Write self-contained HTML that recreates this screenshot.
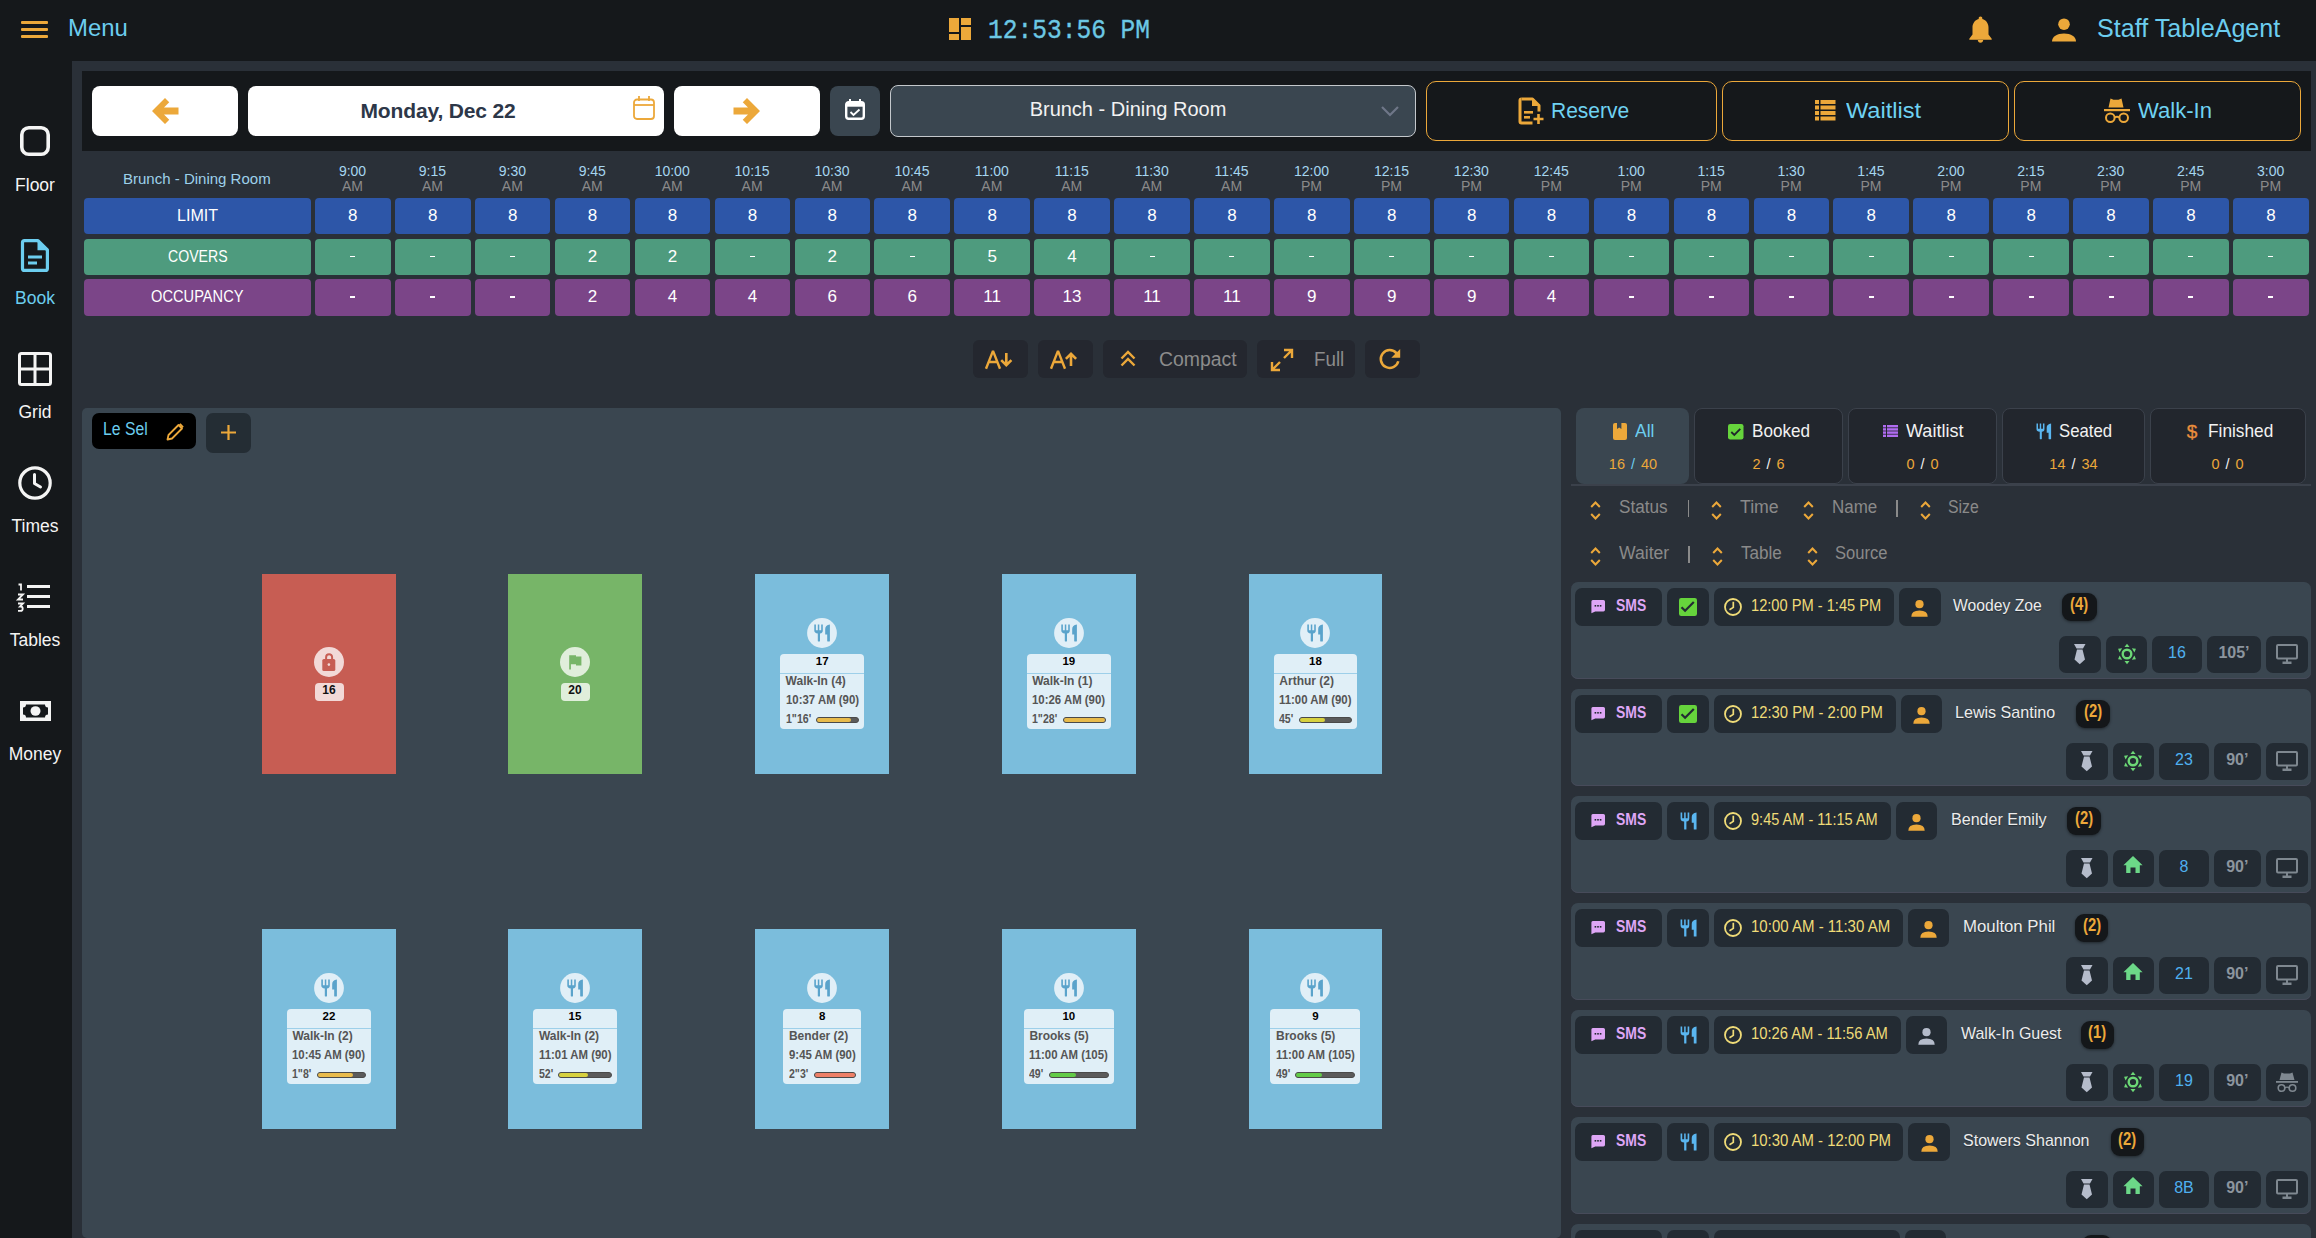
<!DOCTYPE html>
<html><head><meta charset="utf-8"><title>TableAgent</title>
<style>
html,body{margin:0;padding:0;}
body{width:2316px;height:1238px;overflow:hidden;position:relative;background:#2a3038;font-family:"Liberation Sans",sans-serif;}
</style></head><body>
<div style="position:absolute;left:0px;top:0px;width:2316px;height:61px;background:#15181b;border-radius:0px;"></div>
<div style="position:absolute;left:0px;top:61px;width:72px;height:1177px;background:#15181b;border-radius:0px;"></div>
<div style="position:absolute;left:21px;top:20.5px;width:27px;height:3.2px;background:#eca83a;border-radius:1px;"></div>
<div style="position:absolute;left:21px;top:27.8px;width:27px;height:3.2px;background:#eca83a;border-radius:1px;"></div>
<div style="position:absolute;left:21px;top:35px;width:27px;height:3.2px;background:#eca83a;border-radius:1px;"></div>
<div style="position:absolute;left:68.00px;top:16.36px;font:400 24.5px/1 'Liberation Sans', sans-serif;color:#6ccdef;white-space:nowrap;transform:scaleX(0.9754);transform-origin:0 0;">Menu</div>
<svg style="position:absolute;left:949px;top:18px;overflow:visible;" width="22" height="22" viewBox="0 0 22 22"><rect x="0" y="0" width="10" height="14" fill="#eca83a"/><rect x="12" y="0" width="10" height="7" fill="#eca83a"/><rect x="12" y="9" width="10" height="13" fill="#eca83a"/><rect x="0" y="16" width="10" height="6" fill="#eca83a"/></svg>
<div style="position:absolute;left:987.50px;top:16.90px;font:400 27.8px/1 'Liberation Mono', monospace;color:#6cc8e4;white-space:nowrap;transform:scaleX(0.8832);transform-origin:0 0;-webkit-text-stroke:0.35px #6cc8e4;">12:53:56&nbsp;PM</div>
<svg style="position:absolute;left:1969px;top:16px;overflow:visible;" width="23" height="27" viewBox="0 0 23 27"><path d="M11.5 0.5c1.2 0 1.8 0.8 1.8 1.8v0.6c4 1 6.2 4.6 6.2 8.6v7l3.2 4.3v0.9H0.3v-0.9l3.2-4.3v-7c0-4 2.2-7.6 6.2-8.6V2.3c0-1 0.6-1.8 1.8-1.8z" fill="#eca83a"/><path d="M8.8 24h5.4c0 1.6-1.2 2.8-2.7 2.8s-2.7-1.2-2.7-2.8z" fill="#eca83a"/></svg>
<svg style="position:absolute;left:2052px;top:18px;overflow:visible;" width="24" height="24" viewBox="0 0 24 24"><circle cx="12" cy="6.2" r="5.8" fill="#eca83a"/><path d="M0 23.5c0-5 5-8 12-8s12 3 12 8z" fill="#eca83a"/></svg>
<div style="position:absolute;left:2096.60px;top:15.91px;font:400 25.5px/1 'Liberation Sans', sans-serif;color:#6ccdef;white-space:nowrap;transform:scaleX(0.9840);transform-origin:0 0;">Staff TableAgent</div>
<svg style="position:absolute;left:20px;top:126px;overflow:visible;" width="30" height="30" viewBox="0 0 30 30"><rect x="1.8" y="1.8" width="26.4" height="26.4" rx="7" fill="none" stroke="#f4f4f4" stroke-width="3.6"/></svg>
<div style="position:absolute;left:-565px;width:1200px;text-align:center;top:176.68px;font:400 17.5px/1 'Liberation Sans', sans-serif;color:#f4f4f4;white-space:nowrap;">Floor</div>
<svg style="position:absolute;left:21px;top:239px;overflow:visible;" width="28" height="33" viewBox="0 0 28 33"><path d="M3.5 1.6h13.5l9.4 9.4v18.4c0 1.2-0.9 2-2 2H3.5c-1.2 0-2-0.9-2-2V3.6c0-1.2 0.9-2 2-2z" fill="none" stroke="#6ccdef" stroke-width="3.2" stroke-linejoin="round"/><path d="M16.5 1.6v9.6h9.6z" fill="#6ccdef"/><rect x="7" y="16.5" width="14" height="3" fill="#6ccdef"/><rect x="7" y="22.5" width="9" height="3" fill="#6ccdef"/></svg>
<div style="position:absolute;left:-565px;width:1200px;text-align:center;top:289.98px;font:400 17.5px/1 'Liberation Sans', sans-serif;color:#6ccdef;white-space:nowrap;">Book</div>
<svg style="position:absolute;left:18px;top:352px;overflow:visible;" width="34" height="34" viewBox="0 0 34 34"><rect x="1.5" y="1.5" width="31" height="31" rx="2" fill="none" stroke="#f4f4f4" stroke-width="3"/><line x1="17" y1="1.5" x2="17" y2="32.5" stroke="#f4f4f4" stroke-width="3"/><line x1="1.5" y1="17" x2="32.5" y2="17" stroke="#f4f4f4" stroke-width="3"/></svg>
<div style="position:absolute;left:-565px;width:1200px;text-align:center;top:403.88px;font:400 17.5px/1 'Liberation Sans', sans-serif;color:#f4f4f4;white-space:nowrap;">Grid</div>
<svg style="position:absolute;left:18px;top:466px;overflow:visible;" width="34" height="34" viewBox="0 0 34 34"><circle cx="17" cy="17" r="15.2" fill="none" stroke="#f4f4f4" stroke-width="3.2"/><path d="M16.5 8.5v9l6 3.5" fill="none" stroke="#f4f4f4" stroke-width="3" stroke-linecap="round" stroke-linejoin="round"/></svg>
<div style="position:absolute;left:-565px;width:1200px;text-align:center;top:518.08px;font:400 17.5px/1 'Liberation Sans', sans-serif;color:#f4f4f4;white-space:nowrap;">Times</div>
<svg style="position:absolute;left:17px;top:583px;overflow:visible;" width="34" height="28" viewBox="0 0 34 28"><rect x="10" y="2" width="23" height="3" fill="#f4f4f4"/><rect x="10" y="12" width="23" height="3" fill="#f4f4f4"/><rect x="10" y="22" width="23" height="3" fill="#f4f4f4"/><path d="M1.5 1.5h2.5v6" fill="none" stroke="#f4f4f4" stroke-width="1.8"/><path d="M1 11.5h5l-5 5h5" fill="none" stroke="#f4f4f4" stroke-width="1.8"/><path d="M1 20.5h5l-3 3h0.5a2.2 2.2 0 0 1 0 4.4H1" fill="none" stroke="#f4f4f4" stroke-width="1.8"/></svg>
<div style="position:absolute;left:-565px;width:1200px;text-align:center;top:631.88px;font:400 17.5px/1 'Liberation Sans', sans-serif;color:#f4f4f4;white-space:nowrap;">Tables</div>
<svg style="position:absolute;left:19.5px;top:701px;overflow:visible;" width="31" height="20" viewBox="0 0 31 20"><rect x="0" y="0" width="31" height="20" fill="#f4f4f4"/><path d="M6 3.5h19a3 3 0 0 0 3 3v7a3 3 0 0 0-3 3H6a3 3 0 0 0-3-3v-7a3 3 0 0 0 3-3z" fill="#15181b"/><ellipse cx="15.5" cy="10" rx="5" ry="4.8" fill="#f4f4f4"/></svg>
<div style="position:absolute;left:-565px;width:1200px;text-align:center;top:746.18px;font:400 17.5px/1 'Liberation Sans', sans-serif;color:#f4f4f4;white-space:nowrap;">Money</div>
<div style="position:absolute;left:82px;top:71px;width:2229px;height:80px;background:#15181b;border-radius:0px;"></div>
<div style="position:absolute;left:92px;top:86px;width:146px;height:50px;background:#ffffff;border-radius:8px;"></div>
<svg style="position:absolute;left:152px;top:98px;overflow:visible;" width="27" height="26" viewBox="0 0 27 26"><path d="M0 13L13 0L17.25 4.25L12 9.6H26.5V16.4H12L17.25 21.75L13 26Z" fill="#eca83a"/></svg>
<div style="position:absolute;left:248px;top:86px;width:416px;height:50px;background:#ffffff;border-radius:8px;"></div>
<div style="position:absolute;left:360.5px;top:100.22px;font:700 21px/1 'Liberation Sans', sans-serif;color:#2d3748;white-space:nowrap;letter-spacing:-0.15px;">Monday, Dec 22</div>
<svg style="position:absolute;left:633px;top:96px;overflow:visible;" width="22" height="24" viewBox="0 0 22 24"><rect x="1" y="3.5" width="20" height="19.5" rx="3" fill="none" stroke="#eca83a" stroke-width="1.8"/><line x1="1" y1="9" x2="21" y2="9" stroke="#eca83a" stroke-width="1.8"/><line x1="6" y1="0" x2="6" y2="5" stroke="#eca83a" stroke-width="1.8"/><line x1="16" y1="0" x2="16" y2="5" stroke="#eca83a" stroke-width="1.8"/></svg>
<div style="position:absolute;left:674px;top:86px;width:146px;height:50px;background:#ffffff;border-radius:8px;"></div>
<svg style="position:absolute;left:733.2px;top:98px;overflow:visible;" width="27" height="26" viewBox="0 0 27 26"><g transform="translate(27 0) scale(-1 1)"><path d="M0 13L13 0L17.25 4.25L12 9.6H26.5V16.4H12L17.25 21.75L13 26Z" fill="#eca83a"/></g></svg>
<div style="position:absolute;left:830px;top:86px;width:50px;height:50px;background:#3a4650;border-radius:8px;"></div>
<svg style="position:absolute;left:845px;top:99px;overflow:visible;" width="20" height="21" viewBox="0 0 20 21"><rect x="1.2" y="3.2" width="17.6" height="16.6" rx="2.5" fill="none" stroke="#ffffff" stroke-width="2.4"/><rect x="1.2" y="3.2" width="17.6" height="4.5" fill="#ffffff"/><line x1="5" y1="0" x2="5" y2="4" stroke="#ffffff" stroke-width="2"/><line x1="15" y1="0" x2="15" y2="4" stroke="#ffffff" stroke-width="2"/><path d="M5.5 13l3 3 6-5.5" fill="none" stroke="#ffffff" stroke-width="1.8"/></svg>
<div style="position:absolute;left:889.5px;top:85px;width:526.5px;height:52px;background:#3a4650;border-radius:8px;box-sizing:border-box;border:1.6px solid #c4c8cc;"></div>
<div style="position:absolute;left:528px;width:1200px;text-align:center;top:99.17px;font:400 20px/1 'Liberation Sans', sans-serif;color:#f2f2f2;white-space:nowrap;">Brunch - Dining Room</div>
<svg style="position:absolute;left:1381px;top:106px;overflow:visible;" width="18" height="10" viewBox="0 0 18 10"><path d="M1 1l8 8 8-8" fill="none" stroke="#6f7788" stroke-width="2.2"/></svg>
<div style="position:absolute;left:1426px;top:81px;width:291px;height:60px;background:transparent;border-radius:10px;box-sizing:border-box;border:1.6px solid #eca83a;"></div>
<svg style="position:absolute;left:1519px;top:98px;overflow:visible;" width="25" height="27" viewBox="0 0 25 27"><path d="M2.5 1h11l6.5 6.5v6" fill="none" stroke="#eca83a" stroke-width="3" stroke-linejoin="round"/><path d="M2.5 1Q1 1 1 2.5v21q0 1.5 1.5 1.5h11" fill="none" stroke="#eca83a" stroke-width="3"/><path d="M13 1v7h7z" fill="#eca83a"/><rect x="5" y="13" width="9" height="2.6" fill="#eca83a"/><rect x="5" y="18" width="6" height="2.6" fill="#eca83a"/><path d="M19.5 16v10M14.5 21h10" stroke="#eca83a" stroke-width="2.6"/></svg>
<div style="position:absolute;left:1550.50px;top:100.17px;font:400 22px/1 'Liberation Sans', sans-serif;color:#6fd2f2;white-space:nowrap;transform:scaleX(0.9549);transform-origin:0 0;">Reserve</div>
<div style="position:absolute;left:1722px;top:81px;width:287px;height:60px;background:transparent;border-radius:10px;box-sizing:border-box;border:1.6px solid #eca83a;"></div>
<svg style="position:absolute;left:1815px;top:100px;overflow:visible;" width="21" height="21" viewBox="0 0 21 21"><rect x="0" y="0" width="4" height="4" fill="#eca83a"/><rect x="0" y="5.5" width="4" height="4" fill="#eca83a"/><rect x="0" y="11" width="4" height="4" fill="#eca83a"/><rect x="0" y="16.5" width="4" height="4" fill="#eca83a"/><rect x="5.5" y="0" width="15" height="4" fill="#eca83a"/><rect x="5.5" y="5.5" width="15" height="4" fill="#eca83a"/><rect x="5.5" y="11" width="15" height="4" fill="#eca83a"/><rect x="5.5" y="16.5" width="15" height="4" fill="#eca83a"/></svg>
<div style="position:absolute;left:1845.50px;top:100.17px;font:400 22px/1 'Liberation Sans', sans-serif;color:#6fd2f2;white-space:nowrap;transform:scaleX(1.0714);transform-origin:0 0;">Waitlist</div>
<div style="position:absolute;left:2014px;top:81px;width:287px;height:60px;background:transparent;border-radius:10px;box-sizing:border-box;border:1.6px solid #eca83a;"></div>
<svg style="position:absolute;left:2104px;top:98px;overflow:visible;" width="26" height="25" viewBox="0 0 26 25"><path d="M6.5 0.5l3 1.2h5l3-1.2 2 9h-15z" fill="#eca83a"/><rect x="0" y="11" width="26" height="2.2" fill="#eca83a"/><circle cx="6.3" cy="19.8" r="4.3" fill="none" stroke="#eca83a" stroke-width="2"/><circle cx="19.7" cy="19.8" r="4.3" fill="none" stroke="#eca83a" stroke-width="2"/><path d="M10.6 19.5q2.4-1.5 4.8 0" fill="none" stroke="#eca83a" stroke-width="1.8"/></svg>
<div style="position:absolute;left:2137.50px;top:100.17px;font:400 22px/1 'Liberation Sans', sans-serif;color:#6fd2f2;white-space:nowrap;transform:scaleX(1.0041);transform-origin:0 0;">Walk-In</div>
<div style="position:absolute;left:123.30px;top:171.52px;font:400 14.5px/1 'Liberation Sans', sans-serif;color:#9dd0ea;white-space:nowrap;transform:scaleX(1.0350);transform-origin:0 0;">Brunch - Dining Room</div>
<div style="position:absolute;left:84px;top:198px;width:227px;height:36px;background:#2d56a8;border-radius:4px;"></div>
<div style="position:absolute;left:177.15px;top:206.81px;font:400 17px/1 'Liberation Sans', sans-serif;color:#ffffff;white-space:nowrap;transform:scaleX(0.9465);transform-origin:0 0;">LIMIT</div>
<div style="position:absolute;left:315.0px;top:198px;width:75.6px;height:36px;background:#2d56a8;border-radius:4px;"></div>
<div style="position:absolute;left:-247.2px;width:1200px;text-align:center;top:206.81px;font:400 17px/1 'Liberation Sans', sans-serif;color:#ffffff;white-space:nowrap;">8</div>
<div style="position:absolute;left:394.92px;top:198px;width:75.6px;height:36px;background:#2d56a8;border-radius:4px;"></div>
<div style="position:absolute;left:-167.27999999999997px;width:1200px;text-align:center;top:206.81px;font:400 17px/1 'Liberation Sans', sans-serif;color:#ffffff;white-space:nowrap;">8</div>
<div style="position:absolute;left:474.84px;top:198px;width:75.6px;height:36px;background:#2d56a8;border-radius:4px;"></div>
<div style="position:absolute;left:-87.36000000000001px;width:1200px;text-align:center;top:206.81px;font:400 17px/1 'Liberation Sans', sans-serif;color:#ffffff;white-space:nowrap;">8</div>
<div style="position:absolute;left:554.76px;top:198px;width:75.6px;height:36px;background:#2d56a8;border-radius:4px;"></div>
<div style="position:absolute;left:-7.440000000000055px;width:1200px;text-align:center;top:206.81px;font:400 17px/1 'Liberation Sans', sans-serif;color:#ffffff;white-space:nowrap;">8</div>
<div style="position:absolute;left:634.68px;top:198px;width:75.6px;height:36px;background:#2d56a8;border-radius:4px;"></div>
<div style="position:absolute;left:72.48000000000002px;width:1200px;text-align:center;top:206.81px;font:400 17px/1 'Liberation Sans', sans-serif;color:#ffffff;white-space:nowrap;">8</div>
<div style="position:absolute;left:714.6px;top:198px;width:75.6px;height:36px;background:#2d56a8;border-radius:4px;"></div>
<div style="position:absolute;left:152.39999999999998px;width:1200px;text-align:center;top:206.81px;font:400 17px/1 'Liberation Sans', sans-serif;color:#ffffff;white-space:nowrap;">8</div>
<div style="position:absolute;left:794.52px;top:198px;width:75.6px;height:36px;background:#2d56a8;border-radius:4px;"></div>
<div style="position:absolute;left:232.31999999999994px;width:1200px;text-align:center;top:206.81px;font:400 17px/1 'Liberation Sans', sans-serif;color:#ffffff;white-space:nowrap;">8</div>
<div style="position:absolute;left:874.44px;top:198px;width:75.6px;height:36px;background:#2d56a8;border-radius:4px;"></div>
<div style="position:absolute;left:312.24px;width:1200px;text-align:center;top:206.81px;font:400 17px/1 'Liberation Sans', sans-serif;color:#ffffff;white-space:nowrap;">8</div>
<div style="position:absolute;left:954.36px;top:198px;width:75.6px;height:36px;background:#2d56a8;border-radius:4px;"></div>
<div style="position:absolute;left:392.15999999999997px;width:1200px;text-align:center;top:206.81px;font:400 17px/1 'Liberation Sans', sans-serif;color:#ffffff;white-space:nowrap;">8</div>
<div style="position:absolute;left:1034.28px;top:198px;width:75.6px;height:36px;background:#2d56a8;border-radius:4px;"></div>
<div style="position:absolute;left:472.0799999999999px;width:1200px;text-align:center;top:206.81px;font:400 17px/1 'Liberation Sans', sans-serif;color:#ffffff;white-space:nowrap;">8</div>
<div style="position:absolute;left:1114.2px;top:198px;width:75.6px;height:36px;background:#2d56a8;border-radius:4px;"></div>
<div style="position:absolute;left:552.0px;width:1200px;text-align:center;top:206.81px;font:400 17px/1 'Liberation Sans', sans-serif;color:#ffffff;white-space:nowrap;">8</div>
<div style="position:absolute;left:1194.12px;top:198px;width:75.6px;height:36px;background:#2d56a8;border-radius:4px;"></div>
<div style="position:absolute;left:631.9199999999998px;width:1200px;text-align:center;top:206.81px;font:400 17px/1 'Liberation Sans', sans-serif;color:#ffffff;white-space:nowrap;">8</div>
<div style="position:absolute;left:1274.04px;top:198px;width:75.6px;height:36px;background:#2d56a8;border-radius:4px;"></div>
<div style="position:absolute;left:711.8399999999999px;width:1200px;text-align:center;top:206.81px;font:400 17px/1 'Liberation Sans', sans-serif;color:#ffffff;white-space:nowrap;">8</div>
<div style="position:absolute;left:1353.96px;top:198px;width:75.6px;height:36px;background:#2d56a8;border-radius:4px;"></div>
<div style="position:absolute;left:791.76px;width:1200px;text-align:center;top:206.81px;font:400 17px/1 'Liberation Sans', sans-serif;color:#ffffff;white-space:nowrap;">8</div>
<div style="position:absolute;left:1433.88px;top:198px;width:75.6px;height:36px;background:#2d56a8;border-radius:4px;"></div>
<div style="position:absolute;left:871.6800000000001px;width:1200px;text-align:center;top:206.81px;font:400 17px/1 'Liberation Sans', sans-serif;color:#ffffff;white-space:nowrap;">8</div>
<div style="position:absolute;left:1513.8px;top:198px;width:75.6px;height:36px;background:#2d56a8;border-radius:4px;"></div>
<div style="position:absolute;left:951.5999999999999px;width:1200px;text-align:center;top:206.81px;font:400 17px/1 'Liberation Sans', sans-serif;color:#ffffff;white-space:nowrap;">8</div>
<div style="position:absolute;left:1593.72px;top:198px;width:75.6px;height:36px;background:#2d56a8;border-radius:4px;"></div>
<div style="position:absolute;left:1031.52px;width:1200px;text-align:center;top:206.81px;font:400 17px/1 'Liberation Sans', sans-serif;color:#ffffff;white-space:nowrap;">8</div>
<div style="position:absolute;left:1673.64px;top:198px;width:75.6px;height:36px;background:#2d56a8;border-radius:4px;"></div>
<div style="position:absolute;left:1111.44px;width:1200px;text-align:center;top:206.81px;font:400 17px/1 'Liberation Sans', sans-serif;color:#ffffff;white-space:nowrap;">8</div>
<div style="position:absolute;left:1753.56px;top:198px;width:75.6px;height:36px;background:#2d56a8;border-radius:4px;"></div>
<div style="position:absolute;left:1191.36px;width:1200px;text-align:center;top:206.81px;font:400 17px/1 'Liberation Sans', sans-serif;color:#ffffff;white-space:nowrap;">8</div>
<div style="position:absolute;left:1833.48px;top:198px;width:75.6px;height:36px;background:#2d56a8;border-radius:4px;"></div>
<div style="position:absolute;left:1271.28px;width:1200px;text-align:center;top:206.81px;font:400 17px/1 'Liberation Sans', sans-serif;color:#ffffff;white-space:nowrap;">8</div>
<div style="position:absolute;left:1913.4px;top:198px;width:75.6px;height:36px;background:#2d56a8;border-radius:4px;"></div>
<div style="position:absolute;left:1351.2px;width:1200px;text-align:center;top:206.81px;font:400 17px/1 'Liberation Sans', sans-serif;color:#ffffff;white-space:nowrap;">8</div>
<div style="position:absolute;left:1993.32px;top:198px;width:75.6px;height:36px;background:#2d56a8;border-radius:4px;"></div>
<div style="position:absolute;left:1431.12px;width:1200px;text-align:center;top:206.81px;font:400 17px/1 'Liberation Sans', sans-serif;color:#ffffff;white-space:nowrap;">8</div>
<div style="position:absolute;left:2073.24px;top:198px;width:75.6px;height:36px;background:#2d56a8;border-radius:4px;"></div>
<div style="position:absolute;left:1511.04px;width:1200px;text-align:center;top:206.81px;font:400 17px/1 'Liberation Sans', sans-serif;color:#ffffff;white-space:nowrap;">8</div>
<div style="position:absolute;left:2153.16px;top:198px;width:75.6px;height:36px;background:#2d56a8;border-radius:4px;"></div>
<div style="position:absolute;left:1590.96px;width:1200px;text-align:center;top:206.81px;font:400 17px/1 'Liberation Sans', sans-serif;color:#ffffff;white-space:nowrap;">8</div>
<div style="position:absolute;left:2233.08px;top:198px;width:75.6px;height:36px;background:#2d56a8;border-radius:4px;"></div>
<div style="position:absolute;left:1670.88px;width:1200px;text-align:center;top:206.81px;font:400 17px/1 'Liberation Sans', sans-serif;color:#ffffff;white-space:nowrap;">8</div>
<div style="position:absolute;left:84px;top:239px;width:227px;height:36px;background:#4e9b7e;border-radius:4px;"></div>
<div style="position:absolute;left:167.65px;top:247.81px;font:400 17px/1 'Liberation Sans', sans-serif;color:#ffffff;white-space:nowrap;transform:scaleX(0.8292);transform-origin:0 0;">COVERS</div>
<div style="position:absolute;left:315.0px;top:239px;width:75.6px;height:36px;background:#4e9b7e;border-radius:4px;"></div>
<div style="position:absolute;left:350.3px;top:255.5px;width:5px;height:1.6px;background:#ffffff;border-radius:0px;"></div>
<div style="position:absolute;left:394.92px;top:239px;width:75.6px;height:36px;background:#4e9b7e;border-radius:4px;"></div>
<div style="position:absolute;left:430.22px;top:255.5px;width:5px;height:1.6px;background:#ffffff;border-radius:0px;"></div>
<div style="position:absolute;left:474.84px;top:239px;width:75.6px;height:36px;background:#4e9b7e;border-radius:4px;"></div>
<div style="position:absolute;left:510.14px;top:255.5px;width:5px;height:1.6px;background:#ffffff;border-radius:0px;"></div>
<div style="position:absolute;left:554.76px;top:239px;width:75.6px;height:36px;background:#4e9b7e;border-radius:4px;"></div>
<div style="position:absolute;left:-7.440000000000055px;width:1200px;text-align:center;top:247.81px;font:400 17px/1 'Liberation Sans', sans-serif;color:#ffffff;white-space:nowrap;">2</div>
<div style="position:absolute;left:634.68px;top:239px;width:75.6px;height:36px;background:#4e9b7e;border-radius:4px;"></div>
<div style="position:absolute;left:72.48000000000002px;width:1200px;text-align:center;top:247.81px;font:400 17px/1 'Liberation Sans', sans-serif;color:#ffffff;white-space:nowrap;">2</div>
<div style="position:absolute;left:714.6px;top:239px;width:75.6px;height:36px;background:#4e9b7e;border-radius:4px;"></div>
<div style="position:absolute;left:749.9px;top:255.5px;width:5px;height:1.6px;background:#ffffff;border-radius:0px;"></div>
<div style="position:absolute;left:794.52px;top:239px;width:75.6px;height:36px;background:#4e9b7e;border-radius:4px;"></div>
<div style="position:absolute;left:232.31999999999994px;width:1200px;text-align:center;top:247.81px;font:400 17px/1 'Liberation Sans', sans-serif;color:#ffffff;white-space:nowrap;">2</div>
<div style="position:absolute;left:874.44px;top:239px;width:75.6px;height:36px;background:#4e9b7e;border-radius:4px;"></div>
<div style="position:absolute;left:909.74px;top:255.5px;width:5px;height:1.6px;background:#ffffff;border-radius:0px;"></div>
<div style="position:absolute;left:954.36px;top:239px;width:75.6px;height:36px;background:#4e9b7e;border-radius:4px;"></div>
<div style="position:absolute;left:392.15999999999997px;width:1200px;text-align:center;top:247.81px;font:400 17px/1 'Liberation Sans', sans-serif;color:#ffffff;white-space:nowrap;">5</div>
<div style="position:absolute;left:1034.28px;top:239px;width:75.6px;height:36px;background:#4e9b7e;border-radius:4px;"></div>
<div style="position:absolute;left:472.0799999999999px;width:1200px;text-align:center;top:247.81px;font:400 17px/1 'Liberation Sans', sans-serif;color:#ffffff;white-space:nowrap;">4</div>
<div style="position:absolute;left:1114.2px;top:239px;width:75.6px;height:36px;background:#4e9b7e;border-radius:4px;"></div>
<div style="position:absolute;left:1149.5px;top:255.5px;width:5px;height:1.6px;background:#ffffff;border-radius:0px;"></div>
<div style="position:absolute;left:1194.12px;top:239px;width:75.6px;height:36px;background:#4e9b7e;border-radius:4px;"></div>
<div style="position:absolute;left:1229.42px;top:255.5px;width:5px;height:1.6px;background:#ffffff;border-radius:0px;"></div>
<div style="position:absolute;left:1274.04px;top:239px;width:75.6px;height:36px;background:#4e9b7e;border-radius:4px;"></div>
<div style="position:absolute;left:1309.34px;top:255.5px;width:5px;height:1.6px;background:#ffffff;border-radius:0px;"></div>
<div style="position:absolute;left:1353.96px;top:239px;width:75.6px;height:36px;background:#4e9b7e;border-radius:4px;"></div>
<div style="position:absolute;left:1389.26px;top:255.5px;width:5px;height:1.6px;background:#ffffff;border-radius:0px;"></div>
<div style="position:absolute;left:1433.88px;top:239px;width:75.6px;height:36px;background:#4e9b7e;border-radius:4px;"></div>
<div style="position:absolute;left:1469.18px;top:255.5px;width:5px;height:1.6px;background:#ffffff;border-radius:0px;"></div>
<div style="position:absolute;left:1513.8px;top:239px;width:75.6px;height:36px;background:#4e9b7e;border-radius:4px;"></div>
<div style="position:absolute;left:1549.1px;top:255.5px;width:5px;height:1.6px;background:#ffffff;border-radius:0px;"></div>
<div style="position:absolute;left:1593.72px;top:239px;width:75.6px;height:36px;background:#4e9b7e;border-radius:4px;"></div>
<div style="position:absolute;left:1629.02px;top:255.5px;width:5px;height:1.6px;background:#ffffff;border-radius:0px;"></div>
<div style="position:absolute;left:1673.64px;top:239px;width:75.6px;height:36px;background:#4e9b7e;border-radius:4px;"></div>
<div style="position:absolute;left:1708.94px;top:255.5px;width:5px;height:1.6px;background:#ffffff;border-radius:0px;"></div>
<div style="position:absolute;left:1753.56px;top:239px;width:75.6px;height:36px;background:#4e9b7e;border-radius:4px;"></div>
<div style="position:absolute;left:1788.86px;top:255.5px;width:5px;height:1.6px;background:#ffffff;border-radius:0px;"></div>
<div style="position:absolute;left:1833.48px;top:239px;width:75.6px;height:36px;background:#4e9b7e;border-radius:4px;"></div>
<div style="position:absolute;left:1868.78px;top:255.5px;width:5px;height:1.6px;background:#ffffff;border-radius:0px;"></div>
<div style="position:absolute;left:1913.4px;top:239px;width:75.6px;height:36px;background:#4e9b7e;border-radius:4px;"></div>
<div style="position:absolute;left:1948.7px;top:255.5px;width:5px;height:1.6px;background:#ffffff;border-radius:0px;"></div>
<div style="position:absolute;left:1993.32px;top:239px;width:75.6px;height:36px;background:#4e9b7e;border-radius:4px;"></div>
<div style="position:absolute;left:2028.62px;top:255.5px;width:5px;height:1.6px;background:#ffffff;border-radius:0px;"></div>
<div style="position:absolute;left:2073.24px;top:239px;width:75.6px;height:36px;background:#4e9b7e;border-radius:4px;"></div>
<div style="position:absolute;left:2108.54px;top:255.5px;width:5px;height:1.6px;background:#ffffff;border-radius:0px;"></div>
<div style="position:absolute;left:2153.16px;top:239px;width:75.6px;height:36px;background:#4e9b7e;border-radius:4px;"></div>
<div style="position:absolute;left:2188.46px;top:255.5px;width:5px;height:1.6px;background:#ffffff;border-radius:0px;"></div>
<div style="position:absolute;left:2233.08px;top:239px;width:75.6px;height:36px;background:#4e9b7e;border-radius:4px;"></div>
<div style="position:absolute;left:2268.38px;top:255.5px;width:5px;height:1.6px;background:#ffffff;border-radius:0px;"></div>
<div style="position:absolute;left:84px;top:279px;width:227px;height:37px;background:#7b4588;border-radius:4px;"></div>
<div style="position:absolute;left:151.40px;top:288.31px;font:400 17px/1 'Liberation Sans', sans-serif;color:#ffffff;white-space:nowrap;transform:scaleX(0.8617);transform-origin:0 0;">OCCUPANCY</div>
<div style="position:absolute;left:315.0px;top:279px;width:75.6px;height:37px;background:#7b4588;border-radius:4px;"></div>
<div style="position:absolute;left:350.3px;top:296.0px;width:5px;height:1.6px;background:#ffffff;border-radius:0px;"></div>
<div style="position:absolute;left:394.92px;top:279px;width:75.6px;height:37px;background:#7b4588;border-radius:4px;"></div>
<div style="position:absolute;left:430.22px;top:296.0px;width:5px;height:1.6px;background:#ffffff;border-radius:0px;"></div>
<div style="position:absolute;left:474.84px;top:279px;width:75.6px;height:37px;background:#7b4588;border-radius:4px;"></div>
<div style="position:absolute;left:510.14px;top:296.0px;width:5px;height:1.6px;background:#ffffff;border-radius:0px;"></div>
<div style="position:absolute;left:554.76px;top:279px;width:75.6px;height:37px;background:#7b4588;border-radius:4px;"></div>
<div style="position:absolute;left:-7.440000000000055px;width:1200px;text-align:center;top:288.31px;font:400 17px/1 'Liberation Sans', sans-serif;color:#ffffff;white-space:nowrap;">2</div>
<div style="position:absolute;left:634.68px;top:279px;width:75.6px;height:37px;background:#7b4588;border-radius:4px;"></div>
<div style="position:absolute;left:72.48000000000002px;width:1200px;text-align:center;top:288.31px;font:400 17px/1 'Liberation Sans', sans-serif;color:#ffffff;white-space:nowrap;">4</div>
<div style="position:absolute;left:714.6px;top:279px;width:75.6px;height:37px;background:#7b4588;border-radius:4px;"></div>
<div style="position:absolute;left:152.39999999999998px;width:1200px;text-align:center;top:288.31px;font:400 17px/1 'Liberation Sans', sans-serif;color:#ffffff;white-space:nowrap;">4</div>
<div style="position:absolute;left:794.52px;top:279px;width:75.6px;height:37px;background:#7b4588;border-radius:4px;"></div>
<div style="position:absolute;left:232.31999999999994px;width:1200px;text-align:center;top:288.31px;font:400 17px/1 'Liberation Sans', sans-serif;color:#ffffff;white-space:nowrap;">6</div>
<div style="position:absolute;left:874.44px;top:279px;width:75.6px;height:37px;background:#7b4588;border-radius:4px;"></div>
<div style="position:absolute;left:312.24px;width:1200px;text-align:center;top:288.31px;font:400 17px/1 'Liberation Sans', sans-serif;color:#ffffff;white-space:nowrap;">6</div>
<div style="position:absolute;left:954.36px;top:279px;width:75.6px;height:37px;background:#7b4588;border-radius:4px;"></div>
<div style="position:absolute;left:392.15999999999997px;width:1200px;text-align:center;top:288.31px;font:400 17px/1 'Liberation Sans', sans-serif;color:#ffffff;white-space:nowrap;">11</div>
<div style="position:absolute;left:1034.28px;top:279px;width:75.6px;height:37px;background:#7b4588;border-radius:4px;"></div>
<div style="position:absolute;left:472.0799999999999px;width:1200px;text-align:center;top:288.31px;font:400 17px/1 'Liberation Sans', sans-serif;color:#ffffff;white-space:nowrap;">13</div>
<div style="position:absolute;left:1114.2px;top:279px;width:75.6px;height:37px;background:#7b4588;border-radius:4px;"></div>
<div style="position:absolute;left:552.0px;width:1200px;text-align:center;top:288.31px;font:400 17px/1 'Liberation Sans', sans-serif;color:#ffffff;white-space:nowrap;">11</div>
<div style="position:absolute;left:1194.12px;top:279px;width:75.6px;height:37px;background:#7b4588;border-radius:4px;"></div>
<div style="position:absolute;left:631.9199999999998px;width:1200px;text-align:center;top:288.31px;font:400 17px/1 'Liberation Sans', sans-serif;color:#ffffff;white-space:nowrap;">11</div>
<div style="position:absolute;left:1274.04px;top:279px;width:75.6px;height:37px;background:#7b4588;border-radius:4px;"></div>
<div style="position:absolute;left:711.8399999999999px;width:1200px;text-align:center;top:288.31px;font:400 17px/1 'Liberation Sans', sans-serif;color:#ffffff;white-space:nowrap;">9</div>
<div style="position:absolute;left:1353.96px;top:279px;width:75.6px;height:37px;background:#7b4588;border-radius:4px;"></div>
<div style="position:absolute;left:791.76px;width:1200px;text-align:center;top:288.31px;font:400 17px/1 'Liberation Sans', sans-serif;color:#ffffff;white-space:nowrap;">9</div>
<div style="position:absolute;left:1433.88px;top:279px;width:75.6px;height:37px;background:#7b4588;border-radius:4px;"></div>
<div style="position:absolute;left:871.6800000000001px;width:1200px;text-align:center;top:288.31px;font:400 17px/1 'Liberation Sans', sans-serif;color:#ffffff;white-space:nowrap;">9</div>
<div style="position:absolute;left:1513.8px;top:279px;width:75.6px;height:37px;background:#7b4588;border-radius:4px;"></div>
<div style="position:absolute;left:951.5999999999999px;width:1200px;text-align:center;top:288.31px;font:400 17px/1 'Liberation Sans', sans-serif;color:#ffffff;white-space:nowrap;">4</div>
<div style="position:absolute;left:1593.72px;top:279px;width:75.6px;height:37px;background:#7b4588;border-radius:4px;"></div>
<div style="position:absolute;left:1629.02px;top:296.0px;width:5px;height:1.6px;background:#ffffff;border-radius:0px;"></div>
<div style="position:absolute;left:1673.64px;top:279px;width:75.6px;height:37px;background:#7b4588;border-radius:4px;"></div>
<div style="position:absolute;left:1708.94px;top:296.0px;width:5px;height:1.6px;background:#ffffff;border-radius:0px;"></div>
<div style="position:absolute;left:1753.56px;top:279px;width:75.6px;height:37px;background:#7b4588;border-radius:4px;"></div>
<div style="position:absolute;left:1788.86px;top:296.0px;width:5px;height:1.6px;background:#ffffff;border-radius:0px;"></div>
<div style="position:absolute;left:1833.48px;top:279px;width:75.6px;height:37px;background:#7b4588;border-radius:4px;"></div>
<div style="position:absolute;left:1868.78px;top:296.0px;width:5px;height:1.6px;background:#ffffff;border-radius:0px;"></div>
<div style="position:absolute;left:1913.4px;top:279px;width:75.6px;height:37px;background:#7b4588;border-radius:4px;"></div>
<div style="position:absolute;left:1948.7px;top:296.0px;width:5px;height:1.6px;background:#ffffff;border-radius:0px;"></div>
<div style="position:absolute;left:1993.32px;top:279px;width:75.6px;height:37px;background:#7b4588;border-radius:4px;"></div>
<div style="position:absolute;left:2028.62px;top:296.0px;width:5px;height:1.6px;background:#ffffff;border-radius:0px;"></div>
<div style="position:absolute;left:2073.24px;top:279px;width:75.6px;height:37px;background:#7b4588;border-radius:4px;"></div>
<div style="position:absolute;left:2108.54px;top:296.0px;width:5px;height:1.6px;background:#ffffff;border-radius:0px;"></div>
<div style="position:absolute;left:2153.16px;top:279px;width:75.6px;height:37px;background:#7b4588;border-radius:4px;"></div>
<div style="position:absolute;left:2188.46px;top:296.0px;width:5px;height:1.6px;background:#ffffff;border-radius:0px;"></div>
<div style="position:absolute;left:2233.08px;top:279px;width:75.6px;height:37px;background:#7b4588;border-radius:4px;"></div>
<div style="position:absolute;left:2268.38px;top:296.0px;width:5px;height:1.6px;background:#ffffff;border-radius:0px;"></div>
<div style="position:absolute;left:-247.5px;width:1200px;text-align:center;top:164.05px;font:400 14px/1 'Liberation Sans', sans-serif;color:#a6d6f0;white-space:nowrap;">9:00</div>
<div style="position:absolute;left:-247.5px;width:1200px;text-align:center;top:179.15px;font:400 14px/1 'Liberation Sans', sans-serif;color:#8a8a8a;white-space:nowrap;">AM</div>
<div style="position:absolute;left:-167.57999999999998px;width:1200px;text-align:center;top:164.05px;font:400 14px/1 'Liberation Sans', sans-serif;color:#a6d6f0;white-space:nowrap;">9:15</div>
<div style="position:absolute;left:-167.57999999999998px;width:1200px;text-align:center;top:179.15px;font:400 14px/1 'Liberation Sans', sans-serif;color:#8a8a8a;white-space:nowrap;">AM</div>
<div style="position:absolute;left:-87.65999999999997px;width:1200px;text-align:center;top:164.05px;font:400 14px/1 'Liberation Sans', sans-serif;color:#a6d6f0;white-space:nowrap;">9:30</div>
<div style="position:absolute;left:-87.65999999999997px;width:1200px;text-align:center;top:179.15px;font:400 14px/1 'Liberation Sans', sans-serif;color:#8a8a8a;white-space:nowrap;">AM</div>
<div style="position:absolute;left:-7.740000000000009px;width:1200px;text-align:center;top:164.05px;font:400 14px/1 'Liberation Sans', sans-serif;color:#a6d6f0;white-space:nowrap;">9:45</div>
<div style="position:absolute;left:-7.740000000000009px;width:1200px;text-align:center;top:179.15px;font:400 14px/1 'Liberation Sans', sans-serif;color:#8a8a8a;white-space:nowrap;">AM</div>
<div style="position:absolute;left:72.18000000000006px;width:1200px;text-align:center;top:164.05px;font:400 14px/1 'Liberation Sans', sans-serif;color:#a6d6f0;white-space:nowrap;">10:00</div>
<div style="position:absolute;left:72.18000000000006px;width:1200px;text-align:center;top:179.15px;font:400 14px/1 'Liberation Sans', sans-serif;color:#8a8a8a;white-space:nowrap;">AM</div>
<div style="position:absolute;left:152.10000000000002px;width:1200px;text-align:center;top:164.05px;font:400 14px/1 'Liberation Sans', sans-serif;color:#a6d6f0;white-space:nowrap;">10:15</div>
<div style="position:absolute;left:152.10000000000002px;width:1200px;text-align:center;top:179.15px;font:400 14px/1 'Liberation Sans', sans-serif;color:#8a8a8a;white-space:nowrap;">AM</div>
<div style="position:absolute;left:232.01999999999998px;width:1200px;text-align:center;top:164.05px;font:400 14px/1 'Liberation Sans', sans-serif;color:#a6d6f0;white-space:nowrap;">10:30</div>
<div style="position:absolute;left:232.01999999999998px;width:1200px;text-align:center;top:179.15px;font:400 14px/1 'Liberation Sans', sans-serif;color:#8a8a8a;white-space:nowrap;">AM</div>
<div style="position:absolute;left:311.94000000000005px;width:1200px;text-align:center;top:164.05px;font:400 14px/1 'Liberation Sans', sans-serif;color:#a6d6f0;white-space:nowrap;">10:45</div>
<div style="position:absolute;left:311.94000000000005px;width:1200px;text-align:center;top:179.15px;font:400 14px/1 'Liberation Sans', sans-serif;color:#8a8a8a;white-space:nowrap;">AM</div>
<div style="position:absolute;left:391.86px;width:1200px;text-align:center;top:164.05px;font:400 14px/1 'Liberation Sans', sans-serif;color:#a6d6f0;white-space:nowrap;">11:00</div>
<div style="position:absolute;left:391.86px;width:1200px;text-align:center;top:179.15px;font:400 14px/1 'Liberation Sans', sans-serif;color:#8a8a8a;white-space:nowrap;">AM</div>
<div style="position:absolute;left:471.78px;width:1200px;text-align:center;top:164.05px;font:400 14px/1 'Liberation Sans', sans-serif;color:#a6d6f0;white-space:nowrap;">11:15</div>
<div style="position:absolute;left:471.78px;width:1200px;text-align:center;top:179.15px;font:400 14px/1 'Liberation Sans', sans-serif;color:#8a8a8a;white-space:nowrap;">AM</div>
<div style="position:absolute;left:551.7px;width:1200px;text-align:center;top:164.05px;font:400 14px/1 'Liberation Sans', sans-serif;color:#a6d6f0;white-space:nowrap;">11:30</div>
<div style="position:absolute;left:551.7px;width:1200px;text-align:center;top:179.15px;font:400 14px/1 'Liberation Sans', sans-serif;color:#8a8a8a;white-space:nowrap;">AM</div>
<div style="position:absolute;left:631.6199999999999px;width:1200px;text-align:center;top:164.05px;font:400 14px/1 'Liberation Sans', sans-serif;color:#a6d6f0;white-space:nowrap;">11:45</div>
<div style="position:absolute;left:631.6199999999999px;width:1200px;text-align:center;top:179.15px;font:400 14px/1 'Liberation Sans', sans-serif;color:#8a8a8a;white-space:nowrap;">AM</div>
<div style="position:absolute;left:711.54px;width:1200px;text-align:center;top:164.05px;font:400 14px/1 'Liberation Sans', sans-serif;color:#a6d6f0;white-space:nowrap;">12:00</div>
<div style="position:absolute;left:711.54px;width:1200px;text-align:center;top:179.15px;font:400 14px/1 'Liberation Sans', sans-serif;color:#8a8a8a;white-space:nowrap;">PM</div>
<div style="position:absolute;left:791.46px;width:1200px;text-align:center;top:164.05px;font:400 14px/1 'Liberation Sans', sans-serif;color:#a6d6f0;white-space:nowrap;">12:15</div>
<div style="position:absolute;left:791.46px;width:1200px;text-align:center;top:179.15px;font:400 14px/1 'Liberation Sans', sans-serif;color:#8a8a8a;white-space:nowrap;">PM</div>
<div style="position:absolute;left:871.3800000000001px;width:1200px;text-align:center;top:164.05px;font:400 14px/1 'Liberation Sans', sans-serif;color:#a6d6f0;white-space:nowrap;">12:30</div>
<div style="position:absolute;left:871.3800000000001px;width:1200px;text-align:center;top:179.15px;font:400 14px/1 'Liberation Sans', sans-serif;color:#8a8a8a;white-space:nowrap;">PM</div>
<div style="position:absolute;left:951.3px;width:1200px;text-align:center;top:164.05px;font:400 14px/1 'Liberation Sans', sans-serif;color:#a6d6f0;white-space:nowrap;">12:45</div>
<div style="position:absolute;left:951.3px;width:1200px;text-align:center;top:179.15px;font:400 14px/1 'Liberation Sans', sans-serif;color:#8a8a8a;white-space:nowrap;">PM</div>
<div style="position:absolute;left:1031.22px;width:1200px;text-align:center;top:164.05px;font:400 14px/1 'Liberation Sans', sans-serif;color:#a6d6f0;white-space:nowrap;">1:00</div>
<div style="position:absolute;left:1031.22px;width:1200px;text-align:center;top:179.15px;font:400 14px/1 'Liberation Sans', sans-serif;color:#8a8a8a;white-space:nowrap;">PM</div>
<div style="position:absolute;left:1111.14px;width:1200px;text-align:center;top:164.05px;font:400 14px/1 'Liberation Sans', sans-serif;color:#a6d6f0;white-space:nowrap;">1:15</div>
<div style="position:absolute;left:1111.14px;width:1200px;text-align:center;top:179.15px;font:400 14px/1 'Liberation Sans', sans-serif;color:#8a8a8a;white-space:nowrap;">PM</div>
<div style="position:absolute;left:1191.06px;width:1200px;text-align:center;top:164.05px;font:400 14px/1 'Liberation Sans', sans-serif;color:#a6d6f0;white-space:nowrap;">1:30</div>
<div style="position:absolute;left:1191.06px;width:1200px;text-align:center;top:179.15px;font:400 14px/1 'Liberation Sans', sans-serif;color:#8a8a8a;white-space:nowrap;">PM</div>
<div style="position:absolute;left:1270.98px;width:1200px;text-align:center;top:164.05px;font:400 14px/1 'Liberation Sans', sans-serif;color:#a6d6f0;white-space:nowrap;">1:45</div>
<div style="position:absolute;left:1270.98px;width:1200px;text-align:center;top:179.15px;font:400 14px/1 'Liberation Sans', sans-serif;color:#8a8a8a;white-space:nowrap;">PM</div>
<div style="position:absolute;left:1350.9px;width:1200px;text-align:center;top:164.05px;font:400 14px/1 'Liberation Sans', sans-serif;color:#a6d6f0;white-space:nowrap;">2:00</div>
<div style="position:absolute;left:1350.9px;width:1200px;text-align:center;top:179.15px;font:400 14px/1 'Liberation Sans', sans-serif;color:#8a8a8a;white-space:nowrap;">PM</div>
<div style="position:absolute;left:1430.82px;width:1200px;text-align:center;top:164.05px;font:400 14px/1 'Liberation Sans', sans-serif;color:#a6d6f0;white-space:nowrap;">2:15</div>
<div style="position:absolute;left:1430.82px;width:1200px;text-align:center;top:179.15px;font:400 14px/1 'Liberation Sans', sans-serif;color:#8a8a8a;white-space:nowrap;">PM</div>
<div style="position:absolute;left:1510.7399999999998px;width:1200px;text-align:center;top:164.05px;font:400 14px/1 'Liberation Sans', sans-serif;color:#a6d6f0;white-space:nowrap;">2:30</div>
<div style="position:absolute;left:1510.7399999999998px;width:1200px;text-align:center;top:179.15px;font:400 14px/1 'Liberation Sans', sans-serif;color:#8a8a8a;white-space:nowrap;">PM</div>
<div style="position:absolute;left:1590.6599999999999px;width:1200px;text-align:center;top:164.05px;font:400 14px/1 'Liberation Sans', sans-serif;color:#a6d6f0;white-space:nowrap;">2:45</div>
<div style="position:absolute;left:1590.6599999999999px;width:1200px;text-align:center;top:179.15px;font:400 14px/1 'Liberation Sans', sans-serif;color:#8a8a8a;white-space:nowrap;">PM</div>
<div style="position:absolute;left:1670.58px;width:1200px;text-align:center;top:164.05px;font:400 14px/1 'Liberation Sans', sans-serif;color:#a6d6f0;white-space:nowrap;">3:00</div>
<div style="position:absolute;left:1670.58px;width:1200px;text-align:center;top:179.15px;font:400 14px/1 'Liberation Sans', sans-serif;color:#8a8a8a;white-space:nowrap;">PM</div>
<div style="position:absolute;left:973px;top:340px;width:55px;height:38px;background:#24272f;border-radius:6px;"></div>
<div style="position:absolute;left:1038px;top:340px;width:55px;height:38px;background:#24272f;border-radius:6px;"></div>
<div style="position:absolute;left:1103px;top:340px;width:144px;height:38px;background:#24272f;border-radius:6px;"></div>
<div style="position:absolute;left:1257px;top:340px;width:98px;height:38px;background:#24272f;border-radius:6px;"></div>
<div style="position:absolute;left:1365px;top:340px;width:55px;height:38px;background:#24272f;border-radius:6px;"></div>
<svg style="position:absolute;left:984.5px;top:349.5px;overflow:visible;" width="28" height="19" viewBox="0 0 28 19"><path d="M1 18.8L8 0.9L15 18.8M3.6 12H12.4" fill="none" stroke="#eca83a" stroke-width="2.4" stroke-linejoin="bevel"/><path d="M21.3 2.9V15M16.2 10.1L21.3 15.2L26.4 10.1" fill="none" stroke="#eca83a" stroke-width="2.6"/></svg>
<svg style="position:absolute;left:1049.5px;top:349.5px;overflow:visible;" width="28" height="19" viewBox="0 0 28 19"><path d="M1 18.8L8 0.9L15 18.8M3.6 12H12.4" fill="none" stroke="#eca83a" stroke-width="2.4" stroke-linejoin="bevel"/><path d="M21 15.9V4M15.9 8.9L21 3.8L26.1 8.9" fill="none" stroke="#eca83a" stroke-width="2.6"/></svg>
<svg style="position:absolute;left:1120px;top:350px;overflow:visible;" width="16" height="17" viewBox="0 0 16 17"><path d="M1.5 8.5L8 2l6.5 6.5M1.5 15.5L8 9l6.5 6.5" fill="none" stroke="#eca83a" stroke-width="2.4"/></svg>
<div style="position:absolute;left:1159.00px;top:348.57px;font:400 20px/1 'Liberation Sans', sans-serif;color:#8c8c8c;white-space:nowrap;transform:scaleX(0.9713);transform-origin:0 0;">Compact</div>
<svg style="position:absolute;left:1270px;top:347.5px;overflow:visible;" width="24" height="24" viewBox="0 0 24 24"><path d="M14 2h8v8M22 2l-8 8M10 22H2v-8M2 22l8-8" fill="none" stroke="#eca83a" stroke-width="2.4"/></svg>
<div style="position:absolute;left:1313.50px;top:348.57px;font:400 20px/1 'Liberation Sans', sans-serif;color:#8c8c8c;white-space:nowrap;transform:scaleX(0.9375);transform-origin:0 0;">Full</div>
<svg style="position:absolute;left:1379px;top:349px;overflow:visible;" width="22" height="20" viewBox="0 0 22 20"><path d="M19.3 12.2A8.9 8.9 0 1 1 17.6 4.4" fill="none" stroke="#eca83a" stroke-width="2.5"/><path d="M21.2 0V8.8H12.3Z" fill="#eca83a"/></svg>
<div style="position:absolute;left:82px;top:408px;width:1479px;height:830px;background:#3a4650;border-radius:5px;"></div>
<div style="position:absolute;left:92px;top:413px;width:104px;height:36px;background:#000000;border-radius:7px;"></div>
<div style="position:absolute;left:103.20px;top:421.18px;font:400 17.5px/1 'Liberation Sans', sans-serif;color:#6ccdef;white-space:nowrap;transform:scaleX(0.9000);transform-origin:0 0;">Le Sel</div>
<svg style="position:absolute;left:166px;top:422.5px;overflow:visible;" width="18" height="18" viewBox="0 0 18 18"><path d="M1.5 16.5l1-4.5L12.5 2l3.5 3.5-10 10z" fill="none" stroke="#eca83a" stroke-width="1.8" stroke-linejoin="round"/><path d="M13 1.5l1.5-1.2 3.2 3.2-1.2 1.5z" fill="#eca83a"/></svg>
<div style="position:absolute;left:206px;top:413px;width:45px;height:40px;background:#242d34;border-radius:7px;"></div>
<svg style="position:absolute;left:221px;top:425px;overflow:visible;" width="15" height="15" viewBox="0 0 15 15"><path d="M7.5 0v15M0 7.5h15" stroke="#eca83a" stroke-width="2.2"/></svg>
<div style="position:absolute;left:262.2px;top:574px;width:133.6px;height:200px;background:#c75d53;border-radius:0px;"></div>
<svg style="position:absolute;left:314.0px;top:647px;overflow:visible;" width="30" height="30" viewBox="0 0 30 30"><circle cx="15" cy="15" r="15" fill="#f2d9d7"/><path d="M12.1 13V10.2a3 3 0 0 1 6 0V13" fill="none" stroke="#c75d53" stroke-width="2"/><rect x="8.3" y="12" width="13" height="12" rx="1.6" fill="#c75d53"/><circle cx="14.9" cy="17.6" r="1.3" fill="#f2d9d7"/></svg>
<div style="position:absolute;left:314.5px;top:682.5px;width:29px;height:18px;background:#f2d9d7;border-radius:4px;"></div>
<div style="position:absolute;left:-271.0px;width:1200px;text-align:center;top:683.84px;font:700 12px/1 'Liberation Sans', sans-serif;color:#111111;white-space:nowrap;">16</div>
<div style="position:absolute;left:508.2px;top:574px;width:133.6px;height:200px;background:#77b568;border-radius:0px;"></div>
<svg style="position:absolute;left:560.0px;top:647px;overflow:visible;" width="30" height="30" viewBox="0 0 30 30"><circle cx="15" cy="15" r="15" fill="#e0eedb"/><path d="M9.2 8.2H16V9.6H21.4V18.6H16V17.2H10.9V22.6H9.2Z" fill="#77b568"/></svg>
<div style="position:absolute;left:560.5px;top:682.5px;width:29px;height:18px;background:#e0eedb;border-radius:4px;"></div>
<div style="position:absolute;left:-25.0px;width:1200px;text-align:center;top:683.84px;font:700 12px/1 'Liberation Sans', sans-serif;color:#111111;white-space:nowrap;">20</div>
<div style="position:absolute;left:755.4px;top:574px;width:133.6px;height:200px;background:#7bbddc;border-radius:0px;"></div>
<svg style="position:absolute;left:807.1999999999999px;top:618px;overflow:visible;" width="30" height="30" viewBox="0 0 30 30"><circle cx="15" cy="15" r="14.9" fill="#e1eff7"/><path d="M7.3 6.6H8.9V12.2H10.8V6.6H12.3V12.2H14.2V6.6H15.8V12.6Q15.8 15.4 13 15.4V23Q13 23.4 12.6 23.4H11.2Q10.8 23.4 10.8 23V15.4Q7.3 15.4 7.3 12.6Z" fill="#5aa3cb"/><path d="M22.9 6.6V23Q22.9 23.4 22.5 23.4H20.6Q20.2 23.4 20.2 23V16.6H18.2V11Q18.2 7.4 22.9 6.6Z" fill="#5aa3cb"/></svg>
<div style="position:absolute;left:780.1249999999999px;top:653.5px;width:84.14999999999999px;height:75.5px;background:#e0eff7;border-radius:4px;"></div>
<div style="position:absolute;left:780.1249999999999px;top:672.5px;width:84.14999999999999px;height:1.5px;background:#9dcfe9;border-radius:0px;"></div>
<div style="position:absolute;left:222.19999999999993px;width:1200px;text-align:center;top:655.76px;font:700 11.5px/1 'Liberation Sans', sans-serif;color:#000000;white-space:nowrap;">17</div>
<div style="position:absolute;left:785.62px;top:674.54px;font:700 12px/1 'Liberation Sans', sans-serif;color:#555555;white-space:nowrap;transform:scaleX(1.0000);transform-origin:0 0;">Walk-In (4)</div>
<div style="position:absolute;left:785.62px;top:693.54px;font:700 12px/1 'Liberation Sans', sans-serif;color:#555555;white-space:nowrap;transform:scaleX(0.9500);transform-origin:0 0;">10:37 AM (90)</div>
<div style="position:absolute;left:785.62px;top:712.64px;font:700 12px/1 'Liberation Sans', sans-serif;color:#555555;white-space:nowrap;transform:scaleX(0.8800);transform-origin:0 0;">1"16'</div>
<div style="position:absolute;left:816.3449999999999px;top:717px;width:42.92999999999995px;height:5.5px;background:#5b5b5b;border-radius:3px;box-sizing:border-box;border:1px solid #4a4a4a;"></div>
<div style="position:absolute;left:817.3449999999999px;top:718px;width:33.562599999999954px;height:3.5px;background:#e8bb4c;border-radius:2px;"></div>
<div style="position:absolute;left:1002.0px;top:574px;width:133.6px;height:200px;background:#7bbddc;border-radius:0px;"></div>
<svg style="position:absolute;left:1053.8px;top:618px;overflow:visible;" width="30" height="30" viewBox="0 0 30 30"><circle cx="15" cy="15" r="14.9" fill="#e1eff7"/><path d="M7.3 6.6H8.9V12.2H10.8V6.6H12.3V12.2H14.2V6.6H15.8V12.6Q15.8 15.4 13 15.4V23Q13 23.4 12.6 23.4H11.2Q10.8 23.4 10.8 23V15.4Q7.3 15.4 7.3 12.6Z" fill="#5aa3cb"/><path d="M22.9 6.6V23Q22.9 23.4 22.5 23.4H20.6Q20.2 23.4 20.2 23V16.6H18.2V11Q18.2 7.4 22.9 6.6Z" fill="#5aa3cb"/></svg>
<div style="position:absolute;left:1026.725px;top:653.5px;width:84.14999999999999px;height:75.5px;background:#e0eff7;border-radius:4px;"></div>
<div style="position:absolute;left:1026.725px;top:672.5px;width:84.14999999999999px;height:1.5px;background:#9dcfe9;border-radius:0px;"></div>
<div style="position:absolute;left:468.79999999999995px;width:1200px;text-align:center;top:655.76px;font:700 11.5px/1 'Liberation Sans', sans-serif;color:#000000;white-space:nowrap;">19</div>
<div style="position:absolute;left:1032.22px;top:674.54px;font:700 12px/1 'Liberation Sans', sans-serif;color:#555555;white-space:nowrap;transform:scaleX(1.0000);transform-origin:0 0;">Walk-In (1)</div>
<div style="position:absolute;left:1032.22px;top:693.54px;font:700 12px/1 'Liberation Sans', sans-serif;color:#555555;white-space:nowrap;transform:scaleX(0.9500);transform-origin:0 0;">10:26 AM (90)</div>
<div style="position:absolute;left:1032.22px;top:712.64px;font:700 12px/1 'Liberation Sans', sans-serif;color:#555555;white-space:nowrap;transform:scaleX(0.8800);transform-origin:0 0;">1"28'</div>
<div style="position:absolute;left:1062.945px;top:717px;width:42.930000000000064px;height:5.5px;background:#5b5b5b;border-radius:3px;box-sizing:border-box;border:1px solid #4a4a4a;"></div>
<div style="position:absolute;left:1063.945px;top:718px;width:40.930000000000064px;height:3.5px;background:#e8bb4c;border-radius:2px;"></div>
<div style="position:absolute;left:1248.6px;top:574px;width:133.6px;height:200px;background:#7bbddc;border-radius:0px;"></div>
<svg style="position:absolute;left:1300.3999999999999px;top:618px;overflow:visible;" width="30" height="30" viewBox="0 0 30 30"><circle cx="15" cy="15" r="14.9" fill="#e1eff7"/><path d="M7.3 6.6H8.9V12.2H10.8V6.6H12.3V12.2H14.2V6.6H15.8V12.6Q15.8 15.4 13 15.4V23Q13 23.4 12.6 23.4H11.2Q10.8 23.4 10.8 23V15.4Q7.3 15.4 7.3 12.6Z" fill="#5aa3cb"/><path d="M22.9 6.6V23Q22.9 23.4 22.5 23.4H20.6Q20.2 23.4 20.2 23V16.6H18.2V11Q18.2 7.4 22.9 6.6Z" fill="#5aa3cb"/></svg>
<div style="position:absolute;left:1273.8px;top:653.5px;width:83.2px;height:75.5px;background:#e0eff7;border-radius:4px;"></div>
<div style="position:absolute;left:1273.8px;top:672.5px;width:83.2px;height:1.5px;background:#9dcfe9;border-radius:0px;"></div>
<div style="position:absolute;left:715.3999999999999px;width:1200px;text-align:center;top:655.76px;font:700 11.5px/1 'Liberation Sans', sans-serif;color:#000000;white-space:nowrap;">18</div>
<div style="position:absolute;left:1279.30px;top:674.54px;font:700 12px/1 'Liberation Sans', sans-serif;color:#555555;white-space:nowrap;transform:scaleX(1.0000);transform-origin:0 0;">Arthur (2)</div>
<div style="position:absolute;left:1279.30px;top:693.54px;font:700 12px/1 'Liberation Sans', sans-serif;color:#555555;white-space:nowrap;transform:scaleX(0.9500);transform-origin:0 0;">11:00 AM (90)</div>
<div style="position:absolute;left:1279.30px;top:712.64px;font:700 12px/1 'Liberation Sans', sans-serif;color:#555555;white-space:nowrap;transform:scaleX(0.8800);transform-origin:0 0;">45'</div>
<div style="position:absolute;left:1298.58px;top:717px;width:53.42000000000007px;height:5.5px;background:#5b5b5b;border-radius:3px;box-sizing:border-box;border:1px solid #4a4a4a;"></div>
<div style="position:absolute;left:1299.58px;top:718px;width:25.710000000000036px;height:3.5px;background:#d7d13f;border-radius:2px;"></div>
<div style="position:absolute;left:262.2px;top:929px;width:133.6px;height:200px;background:#7bbddc;border-radius:0px;"></div>
<svg style="position:absolute;left:314.0px;top:973px;overflow:visible;" width="30" height="30" viewBox="0 0 30 30"><circle cx="15" cy="15" r="14.9" fill="#e1eff7"/><path d="M7.3 6.6H8.9V12.2H10.8V6.6H12.3V12.2H14.2V6.6H15.8V12.6Q15.8 15.4 13 15.4V23Q13 23.4 12.6 23.4H11.2Q10.8 23.4 10.8 23V15.4Q7.3 15.4 7.3 12.6Z" fill="#5aa3cb"/><path d="M22.9 6.6V23Q22.9 23.4 22.5 23.4H20.6Q20.2 23.4 20.2 23V16.6H18.2V11Q18.2 7.4 22.9 6.6Z" fill="#5aa3cb"/></svg>
<div style="position:absolute;left:286.925px;top:1008.5px;width:84.14999999999999px;height:75.5px;background:#e0eff7;border-radius:4px;"></div>
<div style="position:absolute;left:286.925px;top:1027.5px;width:84.14999999999999px;height:1.5px;background:#9dcfe9;border-radius:0px;"></div>
<div style="position:absolute;left:-271.0px;width:1200px;text-align:center;top:1010.76px;font:700 11.5px/1 'Liberation Sans', sans-serif;color:#000000;white-space:nowrap;">22</div>
<div style="position:absolute;left:292.43px;top:1029.54px;font:700 12px/1 'Liberation Sans', sans-serif;color:#555555;white-space:nowrap;transform:scaleX(1.0000);transform-origin:0 0;">Walk-In (2)</div>
<div style="position:absolute;left:292.43px;top:1048.54px;font:700 12px/1 'Liberation Sans', sans-serif;color:#555555;white-space:nowrap;transform:scaleX(0.9500);transform-origin:0 0;">10:45 AM (90)</div>
<div style="position:absolute;left:292.43px;top:1067.64px;font:700 12px/1 'Liberation Sans', sans-serif;color:#555555;white-space:nowrap;transform:scaleX(0.8800);transform-origin:0 0;">1"8'</div>
<div style="position:absolute;left:316.985px;top:1072px;width:49.089999999999975px;height:5.5px;background:#5b5b5b;border-radius:3px;box-sizing:border-box;border:1px solid #4a4a4a;"></div>
<div style="position:absolute;left:317.985px;top:1073px;width:35.31749999999998px;height:3.5px;background:#e8bb4c;border-radius:2px;"></div>
<div style="position:absolute;left:508.2px;top:929px;width:133.6px;height:200px;background:#7bbddc;border-radius:0px;"></div>
<svg style="position:absolute;left:560.0px;top:973px;overflow:visible;" width="30" height="30" viewBox="0 0 30 30"><circle cx="15" cy="15" r="14.9" fill="#e1eff7"/><path d="M7.3 6.6H8.9V12.2H10.8V6.6H12.3V12.2H14.2V6.6H15.8V12.6Q15.8 15.4 13 15.4V23Q13 23.4 12.6 23.4H11.2Q10.8 23.4 10.8 23V15.4Q7.3 15.4 7.3 12.6Z" fill="#5aa3cb"/><path d="M22.9 6.6V23Q22.9 23.4 22.5 23.4H20.6Q20.2 23.4 20.2 23V16.6H18.2V11Q18.2 7.4 22.9 6.6Z" fill="#5aa3cb"/></svg>
<div style="position:absolute;left:533.4px;top:1008.5px;width:83.2px;height:75.5px;background:#e0eff7;border-radius:4px;"></div>
<div style="position:absolute;left:533.4px;top:1027.5px;width:83.2px;height:1.5px;background:#9dcfe9;border-radius:0px;"></div>
<div style="position:absolute;left:-25.0px;width:1200px;text-align:center;top:1010.76px;font:700 11.5px/1 'Liberation Sans', sans-serif;color:#000000;white-space:nowrap;">15</div>
<div style="position:absolute;left:538.90px;top:1029.54px;font:700 12px/1 'Liberation Sans', sans-serif;color:#555555;white-space:nowrap;transform:scaleX(1.0000);transform-origin:0 0;">Walk-In (2)</div>
<div style="position:absolute;left:538.90px;top:1048.54px;font:700 12px/1 'Liberation Sans', sans-serif;color:#555555;white-space:nowrap;transform:scaleX(0.9500);transform-origin:0 0;">11:01 AM (90)</div>
<div style="position:absolute;left:538.90px;top:1067.64px;font:700 12px/1 'Liberation Sans', sans-serif;color:#555555;white-space:nowrap;transform:scaleX(0.8800);transform-origin:0 0;">52'</div>
<div style="position:absolute;left:558.1800000000001px;top:1072px;width:53.41999999999996px;height:5.5px;background:#5b5b5b;border-radius:3px;box-sizing:border-box;border:1px solid #4a4a4a;"></div>
<div style="position:absolute;left:559.1800000000001px;top:1073px;width:29.309399999999975px;height:3.5px;background:#d7d13f;border-radius:2px;"></div>
<div style="position:absolute;left:755.4px;top:929px;width:133.6px;height:200px;background:#7bbddc;border-radius:0px;"></div>
<svg style="position:absolute;left:807.1999999999999px;top:973px;overflow:visible;" width="30" height="30" viewBox="0 0 30 30"><circle cx="15" cy="15" r="14.9" fill="#e1eff7"/><path d="M7.3 6.6H8.9V12.2H10.8V6.6H12.3V12.2H14.2V6.6H15.8V12.6Q15.8 15.4 13 15.4V23Q13 23.4 12.6 23.4H11.2Q10.8 23.4 10.8 23V15.4Q7.3 15.4 7.3 12.6Z" fill="#5aa3cb"/><path d="M22.9 6.6V23Q22.9 23.4 22.5 23.4H20.6Q20.2 23.4 20.2 23V16.6H18.2V11Q18.2 7.4 22.9 6.6Z" fill="#5aa3cb"/></svg>
<div style="position:absolute;left:783.4499999999999px;top:1008.5px;width:77.5px;height:75.5px;background:#e0eff7;border-radius:4px;"></div>
<div style="position:absolute;left:783.4499999999999px;top:1027.5px;width:77.5px;height:1.5px;background:#9dcfe9;border-radius:0px;"></div>
<div style="position:absolute;left:222.19999999999993px;width:1200px;text-align:center;top:1010.76px;font:700 11.5px/1 'Liberation Sans', sans-serif;color:#000000;white-space:nowrap;">8</div>
<div style="position:absolute;left:788.95px;top:1029.54px;font:700 12px/1 'Liberation Sans', sans-serif;color:#555555;white-space:nowrap;transform:scaleX(1.0000);transform-origin:0 0;">Bender (2)</div>
<div style="position:absolute;left:788.95px;top:1048.54px;font:700 12px/1 'Liberation Sans', sans-serif;color:#555555;white-space:nowrap;transform:scaleX(0.9500);transform-origin:0 0;">9:45 AM (90)</div>
<div style="position:absolute;left:788.95px;top:1067.64px;font:700 12px/1 'Liberation Sans', sans-serif;color:#555555;white-space:nowrap;transform:scaleX(0.8800);transform-origin:0 0;">2"3'</div>
<div style="position:absolute;left:813.51px;top:1072px;width:42.43999999999994px;height:5.5px;background:#5b5b5b;border-radius:3px;box-sizing:border-box;border:1px solid #4a4a4a;"></div>
<div style="position:absolute;left:814.51px;top:1073px;width:40.43999999999994px;height:3.5px;background:#ee8068;border-radius:2px;"></div>
<div style="position:absolute;left:1002.0px;top:929px;width:133.6px;height:200px;background:#7bbddc;border-radius:0px;"></div>
<svg style="position:absolute;left:1053.8px;top:973px;overflow:visible;" width="30" height="30" viewBox="0 0 30 30"><circle cx="15" cy="15" r="14.9" fill="#e1eff7"/><path d="M7.3 6.6H8.9V12.2H10.8V6.6H12.3V12.2H14.2V6.6H15.8V12.6Q15.8 15.4 13 15.4V23Q13 23.4 12.6 23.4H11.2Q10.8 23.4 10.8 23V15.4Q7.3 15.4 7.3 12.6Z" fill="#5aa3cb"/><path d="M22.9 6.6V23Q22.9 23.4 22.5 23.4H20.6Q20.2 23.4 20.2 23V16.6H18.2V11Q18.2 7.4 22.9 6.6Z" fill="#5aa3cb"/></svg>
<div style="position:absolute;left:1023.875px;top:1008.5px;width:89.85px;height:75.5px;background:#e0eff7;border-radius:4px;"></div>
<div style="position:absolute;left:1023.875px;top:1027.5px;width:89.85px;height:1.5px;background:#9dcfe9;border-radius:0px;"></div>
<div style="position:absolute;left:468.79999999999995px;width:1200px;text-align:center;top:1010.76px;font:700 11.5px/1 'Liberation Sans', sans-serif;color:#000000;white-space:nowrap;">10</div>
<div style="position:absolute;left:1029.38px;top:1029.54px;font:700 12px/1 'Liberation Sans', sans-serif;color:#555555;white-space:nowrap;transform:scaleX(1.0000);transform-origin:0 0;">Brooks (5)</div>
<div style="position:absolute;left:1029.38px;top:1048.54px;font:700 12px/1 'Liberation Sans', sans-serif;color:#555555;white-space:nowrap;transform:scaleX(0.9500);transform-origin:0 0;">11:00 AM (105)</div>
<div style="position:absolute;left:1029.38px;top:1067.64px;font:700 12px/1 'Liberation Sans', sans-serif;color:#555555;white-space:nowrap;transform:scaleX(0.8800);transform-origin:0 0;">49'</div>
<div style="position:absolute;left:1048.655px;top:1072px;width:60.069999999999936px;height:5.5px;background:#5b5b5b;border-radius:3px;box-sizing:border-box;border:1px solid #4a4a4a;"></div>
<div style="position:absolute;left:1049.655px;top:1073px;width:26.13149999999997px;height:3.5px;background:#62cc48;border-radius:2px;"></div>
<div style="position:absolute;left:1248.6px;top:929px;width:133.6px;height:200px;background:#7bbddc;border-radius:0px;"></div>
<svg style="position:absolute;left:1300.3999999999999px;top:973px;overflow:visible;" width="30" height="30" viewBox="0 0 30 30"><circle cx="15" cy="15" r="14.9" fill="#e1eff7"/><path d="M7.3 6.6H8.9V12.2H10.8V6.6H12.3V12.2H14.2V6.6H15.8V12.6Q15.8 15.4 13 15.4V23Q13 23.4 12.6 23.4H11.2Q10.8 23.4 10.8 23V15.4Q7.3 15.4 7.3 12.6Z" fill="#5aa3cb"/><path d="M22.9 6.6V23Q22.9 23.4 22.5 23.4H20.6Q20.2 23.4 20.2 23V16.6H18.2V11Q18.2 7.4 22.9 6.6Z" fill="#5aa3cb"/></svg>
<div style="position:absolute;left:1270.475px;top:1008.5px;width:89.85px;height:75.5px;background:#e0eff7;border-radius:4px;"></div>
<div style="position:absolute;left:1270.475px;top:1027.5px;width:89.85px;height:1.5px;background:#9dcfe9;border-radius:0px;"></div>
<div style="position:absolute;left:715.3999999999999px;width:1200px;text-align:center;top:1010.76px;font:700 11.5px/1 'Liberation Sans', sans-serif;color:#000000;white-space:nowrap;">9</div>
<div style="position:absolute;left:1275.97px;top:1029.54px;font:700 12px/1 'Liberation Sans', sans-serif;color:#555555;white-space:nowrap;transform:scaleX(1.0000);transform-origin:0 0;">Brooks (5)</div>
<div style="position:absolute;left:1275.97px;top:1048.54px;font:700 12px/1 'Liberation Sans', sans-serif;color:#555555;white-space:nowrap;transform:scaleX(0.9500);transform-origin:0 0;">11:00 AM (105)</div>
<div style="position:absolute;left:1275.97px;top:1067.64px;font:700 12px/1 'Liberation Sans', sans-serif;color:#555555;white-space:nowrap;transform:scaleX(0.8800);transform-origin:0 0;">49'</div>
<div style="position:absolute;left:1295.2549999999999px;top:1072px;width:60.069999999999936px;height:5.5px;background:#5b5b5b;border-radius:3px;box-sizing:border-box;border:1px solid #4a4a4a;"></div>
<div style="position:absolute;left:1296.2549999999999px;top:1073px;width:26.13149999999997px;height:3.5px;background:#62cc48;border-radius:2px;"></div>
<div style="position:absolute;left:1576px;top:408px;width:113px;height:76px;background:#3a4650;border-radius:8px;"></div>
<div style="position:absolute;left:1694px;top:408px;width:149px;height:76px;background:#22262d;border-radius:8px;box-sizing:border-box;border:1px solid #3b414b;"></div>
<div style="position:absolute;left:1848px;top:408px;width:148.5px;height:76px;background:#22262d;border-radius:8px;box-sizing:border-box;border:1px solid #3b414b;"></div>
<div style="position:absolute;left:2002px;top:408px;width:142.5px;height:76px;background:#22262d;border-radius:8px;box-sizing:border-box;border:1px solid #3b414b;"></div>
<div style="position:absolute;left:2150px;top:408px;width:156px;height:76px;background:#22262d;border-radius:8px;box-sizing:border-box;border:1px solid #3b414b;"></div>
<div style="position:absolute;left:1571px;top:484px;width:740px;height:1.5px;background:#3b414b;border-radius:0px;"></div>
<svg style="position:absolute;left:1613px;top:422.5px;overflow:visible;" width="14" height="17" viewBox="0 0 14 17"><path d="M2 0h10a2 2 0 0 1 2 2v13a2 2 0 0 1-2 2H2a2 2 0 0 1-2-2V2a2 2 0 0 1 2-2z" fill="#eca83a"/><path d="M4 0v6l2.2-1.6L8.4 6V0z" fill="#3a4650"/></svg>
<div style="position:absolute;left:1635.20px;top:421.54px;font:400 18.5px/1 'Liberation Sans', sans-serif;color:#6ccdef;white-space:nowrap;transform:scaleX(0.9429);transform-origin:0 0;">All</div>
<div style="position:absolute;left:1033px;width:1200px;text-align:center;top:456.72px;font:400 14.5px/1 'Liberation Sans', sans-serif;color:#eca83a;white-space:nowrap;word-spacing:2px;">16 <span style="color:#6ccdef">/</span> 40</div>
<svg style="position:absolute;left:1728px;top:423.5px;overflow:visible;" width="15.5" height="15.5" viewBox="0 0 15.5 15.5"><rect x="0" y="0" width="15.5" height="15.5" rx="2.2" fill="#66d43c"/><path d="M3.3 8l3 3 6-6.2" fill="none" stroke="#1f242b" stroke-width="1.8"/></svg>
<div style="position:absolute;left:1752.30px;top:421.54px;font:400 18.5px/1 'Liberation Sans', sans-serif;color:#f2f2f2;white-space:nowrap;transform:scaleX(0.9238);transform-origin:0 0;">Booked</div>
<div style="position:absolute;left:1168.5px;width:1200px;text-align:center;top:456.72px;font:400 14.5px/1 'Liberation Sans', sans-serif;color:#eca83a;white-space:nowrap;word-spacing:2px;">2 <span style="color:#f2f2f2">/</span> 6</div>
<svg style="position:absolute;left:1883px;top:425px;overflow:visible;" width="15" height="12" viewBox="0 0 15 12"><g fill="#b06cf0"><rect x="0" y="0" width="3" height="2.4"/><rect x="0" y="3.2" width="3" height="2.4"/><rect x="0" y="6.4" width="3" height="2.4"/><rect x="0" y="9.6" width="3" height="2.4"/><rect x="4" y="0" width="11" height="2.4"/><rect x="4" y="3.2" width="11" height="2.4"/><rect x="4" y="6.4" width="11" height="2.4"/><rect x="4" y="9.6" width="11" height="2.4"/></g></svg>
<div style="position:absolute;left:1905.80px;top:421.54px;font:400 18.5px/1 'Liberation Sans', sans-serif;color:#f2f2f2;white-space:nowrap;transform:scaleX(0.9750);transform-origin:0 0;">Waitlist</div>
<div style="position:absolute;left:1322.5px;width:1200px;text-align:center;top:456.72px;font:400 14.5px/1 'Liberation Sans', sans-serif;color:#eca83a;white-space:nowrap;word-spacing:2px;">0 <span style="color:#f2f2f2">/</span> 0</div>
<svg style="position:absolute;left:2036.3px;top:423px;overflow:visible;" width="15.5" height="16.5" viewBox="6.8 6.2 16.5 17.6"><path d="M7.3 6.6H8.9V12.2H10.8V6.6H12.3V12.2H14.2V6.6H15.8V12.6Q15.8 15.4 13 15.4V23Q13 23.4 12.6 23.4H11.2Q10.8 23.4 10.8 23V15.4Q7.3 15.4 7.3 12.6Z" fill="#5ab6f0"/><path d="M22.9 6.6V23Q22.9 23.4 22.5 23.4H20.6Q20.2 23.4 20.2 23V16.6H18.2V11Q18.2 7.4 22.9 6.6Z" fill="#5ab6f0"/></svg>
<div style="position:absolute;left:2058.90px;top:421.54px;font:400 18.5px/1 'Liberation Sans', sans-serif;color:#f2f2f2;white-space:nowrap;transform:scaleX(0.9051);transform-origin:0 0;">Seated</div>
<div style="position:absolute;left:1473.5px;width:1200px;text-align:center;top:456.72px;font:400 14.5px/1 'Liberation Sans', sans-serif;color:#eca83a;white-space:nowrap;word-spacing:2px;">14 <span style="color:#f2f2f2">/</span> 34</div>
<div style="position:absolute;left:1592px;width:1200px;text-align:center;top:421.91px;font:400 19px/1 'Liberation Sans', sans-serif;color:#ea8e3c;white-space:nowrap;-webkit-text-stroke:0.3px #ea8e3c;">$</div>
<div style="position:absolute;left:2207.90px;top:421.54px;font:400 18.5px/1 'Liberation Sans', sans-serif;color:#f2f2f2;white-space:nowrap;transform:scaleX(0.9329);transform-origin:0 0;">Finished</div>
<div style="position:absolute;left:1627.5px;width:1200px;text-align:center;top:456.72px;font:400 14.5px/1 'Liberation Sans', sans-serif;color:#eca83a;white-space:nowrap;word-spacing:2px;">0 <span style="color:#f2f2f2">/</span> 0</div>
<svg style="position:absolute;left:1590px;top:500.8px;overflow:visible;" width="11" height="19" viewBox="0 0 11 19"><path d="M1.2 6l4.3-4.5 4.3 4.5M1.2 13l4.3 4.5 4.3-4.5" fill="none" stroke="#eca83a" stroke-width="2"/></svg>
<div style="position:absolute;left:1619.20px;top:498.68px;font:400 17.5px/1 'Liberation Sans', sans-serif;color:#8a8a8a;white-space:nowrap;transform:scaleX(0.9800);transform-origin:0 0;">Status</div>
<div style="position:absolute;left:1687.5px;top:500.0px;width:1.8px;height:17px;background:#8a8a8a;border-radius:0px;"></div>
<svg style="position:absolute;left:1711px;top:500.8px;overflow:visible;" width="11" height="19" viewBox="0 0 11 19"><path d="M1.2 6l4.3-4.5 4.3 4.5M1.2 13l4.3 4.5 4.3-4.5" fill="none" stroke="#eca83a" stroke-width="2"/></svg>
<div style="position:absolute;left:1739.60px;top:498.68px;font:400 17.5px/1 'Liberation Sans', sans-serif;color:#8a8a8a;white-space:nowrap;transform:scaleX(1.0128);transform-origin:0 0;">Time</div>
<svg style="position:absolute;left:1803px;top:500.8px;overflow:visible;" width="11" height="19" viewBox="0 0 11 19"><path d="M1.2 6l4.3-4.5 4.3 4.5M1.2 13l4.3 4.5 4.3-4.5" fill="none" stroke="#eca83a" stroke-width="2"/></svg>
<div style="position:absolute;left:1832.00px;top:498.68px;font:400 17.5px/1 'Liberation Sans', sans-serif;color:#8a8a8a;white-space:nowrap;transform:scaleX(0.9681);transform-origin:0 0;">Name</div>
<div style="position:absolute;left:1896px;top:500.0px;width:1.8px;height:17px;background:#8a8a8a;border-radius:0px;"></div>
<svg style="position:absolute;left:1920px;top:500.8px;overflow:visible;" width="11" height="19" viewBox="0 0 11 19"><path d="M1.2 6l4.3-4.5 4.3 4.5M1.2 13l4.3 4.5 4.3-4.5" fill="none" stroke="#eca83a" stroke-width="2"/></svg>
<div style="position:absolute;left:1948.30px;top:498.68px;font:400 17.5px/1 'Liberation Sans', sans-serif;color:#8a8a8a;white-space:nowrap;transform:scaleX(0.9029);transform-origin:0 0;">Size</div>
<svg style="position:absolute;left:1590px;top:546.8px;overflow:visible;" width="11" height="19" viewBox="0 0 11 19"><path d="M1.2 6l4.3-4.5 4.3 4.5M1.2 13l4.3 4.5 4.3-4.5" fill="none" stroke="#eca83a" stroke-width="2"/></svg>
<div style="position:absolute;left:1619.20px;top:544.68px;font:400 17.5px/1 'Liberation Sans', sans-serif;color:#8a8a8a;white-space:nowrap;transform:scaleX(1.0060);transform-origin:0 0;">Waiter</div>
<div style="position:absolute;left:1688px;top:546.0px;width:1.8px;height:17px;background:#8a8a8a;border-radius:0px;"></div>
<svg style="position:absolute;left:1712px;top:546.8px;overflow:visible;" width="11" height="19" viewBox="0 0 11 19"><path d="M1.2 6l4.3-4.5 4.3 4.5M1.2 13l4.3 4.5 4.3-4.5" fill="none" stroke="#eca83a" stroke-width="2"/></svg>
<div style="position:absolute;left:1740.50px;top:544.68px;font:400 17.5px/1 'Liberation Sans', sans-serif;color:#8a8a8a;white-space:nowrap;transform:scaleX(0.9762);transform-origin:0 0;">Table</div>
<svg style="position:absolute;left:1807px;top:546.8px;overflow:visible;" width="11" height="19" viewBox="0 0 11 19"><path d="M1.2 6l4.3-4.5 4.3 4.5M1.2 13l4.3 4.5 4.3-4.5" fill="none" stroke="#eca83a" stroke-width="2"/></svg>
<div style="position:absolute;left:1835.20px;top:544.68px;font:400 17.5px/1 'Liberation Sans', sans-serif;color:#8a8a8a;white-space:nowrap;transform:scaleX(0.9464);transform-origin:0 0;">Source</div>
<div style="position:absolute;left:1571px;top:582px;width:740px;height:97px;background:#3a4650;border-radius:7px;box-shadow:inset 0 -1px 0 #474b5a;"></div>
<div style="position:absolute;left:1575px;top:588px;width:87px;height:38px;background:#232b33;border-radius:7px;"></div>
<svg style="position:absolute;left:1591px;top:600px;overflow:visible;" width="14" height="13.5" viewBox="0 0 14 13.5"><path d="M1.8 0h10.6A1.6 1.6 0 0 1 14 1.6v8.2a1.6 1.6 0 0 1-1.6 1.6H4.2L0.4 13.3V1.6A1.6 1.6 0 0 1 1.8 0z" fill="#dea6f6"/><rect x="3.6" y="5" width="1.6" height="1.6" fill="#232b33"/><rect x="6.2" y="5" width="1.6" height="1.6" fill="#232b33"/><rect x="8.8" y="5" width="1.6" height="1.6" fill="#232b33"/></svg>
<div style="position:absolute;left:1616.30px;top:597.23px;font:700 16.5px/1 'Liberation Sans', sans-serif;color:#dea6f6;white-space:nowrap;transform:scaleX(0.8444);transform-origin:0 0;">SMS</div>
<div style="position:absolute;left:1667px;top:588px;width:42px;height:38px;background:#232b33;border-radius:7px;"></div>
<svg style="position:absolute;left:1679px;top:598px;overflow:visible;" width="18" height="18" viewBox="0 0 18 18"><rect x="0" y="0" width="18" height="18" rx="2.2" fill="#66d43c"/><path d="M2.5 9.2l3.6 3.6L14.8 4" fill="none" stroke="#232b33" stroke-width="2.2"/></svg>
<div style="position:absolute;left:1714px;top:588px;width:180px;height:38px;background:#232b33;border-radius:7px;"></div>
<svg style="position:absolute;left:1724px;top:598px;overflow:visible;" width="18" height="18" viewBox="0 0 18 18"><circle cx="9" cy="9" r="8" fill="none" stroke="#f0dc78" stroke-width="1.8"/><path d="M9.3 3.8v5.6L5.5 11.8" fill="none" stroke="#f0dc78" stroke-width="1.7"/></svg>
<div style="position:absolute;left:1750.50px;top:597.33px;font:400 16.5px/1 'Liberation Sans', sans-serif;color:#f0dc78;white-space:nowrap;transform:scaleX(0.8878);transform-origin:0 0;">12:00 PM - 1:45 PM</div>
<div style="position:absolute;left:1899px;top:588px;width:41.5px;height:38px;background:#232b33;border-radius:7px;"></div>
<svg style="position:absolute;left:1911.2px;top:599.5px;overflow:visible;" width="17" height="17" viewBox="0 0 17 17"><circle cx="8.5" cy="4.2" r="4.1" fill="#eca83a"/><path d="M0.3 16.8q0-6.2 8.2-6.2t8.2 6.2z" fill="#eca83a"/></svg>
<div style="position:absolute;left:1953.00px;top:596.81px;font:400 17px/1 'Liberation Sans', sans-serif;color:#ececec;white-space:nowrap;transform:scaleX(0.9229);transform-origin:0 0;text-shadow:0 1px 1px rgba(0,0,0,.35);">Woodey Zoe</div>
<div style="position:absolute;left:2062px;top:593px;width:35px;height:28px;background:#14171a;border-radius:9px;box-shadow:0 1px 3px rgba(0,0,0,.45);"></div>
<div style="position:absolute;left:2070.20px;top:595.98px;font:700 17.5px/1 'Liberation Sans', sans-serif;color:#eca83a;white-space:nowrap;transform:scaleX(0.8455);transform-origin:0 0;">(4)</div>
<div style="position:absolute;left:2059px;top:636px;width:42px;height:37px;background:#232b33;border-radius:7px;"></div>
<div style="position:absolute;left:2106px;top:636px;width:41px;height:37px;background:#232b33;border-radius:7px;"></div>
<div style="position:absolute;left:2152px;top:636px;width:50px;height:37px;background:#232b33;border-radius:7px;"></div>
<div style="position:absolute;left:2207px;top:636px;width:54px;height:37px;background:#232b33;border-radius:7px;"></div>
<div style="position:absolute;left:2266px;top:636px;width:42px;height:37px;background:#232b33;border-radius:7px;"></div>
<svg style="position:absolute;left:2074.25px;top:643.8px;overflow:visible;" width="12" height="20" viewBox="0 0 12 20"><path d="M0 0h11.5L9 4.5h-6.5z" fill="#b5bccb"/><path d="M3 5.5h5.5L11 15.5 5.75 20.2 0.5 15.5z" fill="#b5bccb"/></svg>
<svg style="position:absolute;left:2117.5px;top:643.5px;overflow:visible;" width="18" height="20" viewBox="0 0 18 20"><circle cx="9" cy="10" r="4.3" fill="none" stroke="#6cd876" stroke-width="2.4"/><path d="M9.00 -0.30L11.50 2.90L6.50 2.90z" fill="#6cd876"/><path d="M17.92 4.85L16.40 8.62L13.90 4.28z" fill="#6cd876"/><path d="M17.92 15.15L13.90 15.72L16.40 11.38z" fill="#6cd876"/><path d="M9.00 20.30L6.50 17.10L11.50 17.10z" fill="#6cd876"/><path d="M0.08 15.15L1.60 11.38L4.10 15.72z" fill="#6cd876"/><path d="M0.08 4.85L4.10 4.28L1.60 8.62z" fill="#6cd876"/></svg>
<div style="position:absolute;left:1577.0px;width:1200px;text-align:center;top:644.65px;font:400 16px/1 'Liberation Sans', sans-serif;color:#4fb0f0;white-space:nowrap;">16</div>
<div style="position:absolute;left:1634.0px;width:1200px;text-align:center;top:644.65px;font:700 16px/1 'Liberation Sans', sans-serif;color:#8c959e;white-space:nowrap;">105&#8217;</div>
<svg style="position:absolute;left:2276.0px;top:644px;overflow:visible;" width="22" height="20" viewBox="0 0 22 20"><rect x="1" y="1" width="20" height="13.5" rx="1" fill="none" stroke="#7f8890" stroke-width="2"/><rect x="10" y="15" width="2" height="3" fill="#7f8890"/><rect x="6.5" y="17.5" width="9" height="2.5" fill="#7f8890"/></svg>
<div style="position:absolute;left:1571px;top:689px;width:740px;height:97px;background:#3a4650;border-radius:7px;box-shadow:inset 0 -1px 0 #474b5a;"></div>
<div style="position:absolute;left:1575px;top:695px;width:87px;height:38px;background:#232b33;border-radius:7px;"></div>
<svg style="position:absolute;left:1591px;top:707px;overflow:visible;" width="14" height="13.5" viewBox="0 0 14 13.5"><path d="M1.8 0h10.6A1.6 1.6 0 0 1 14 1.6v8.2a1.6 1.6 0 0 1-1.6 1.6H4.2L0.4 13.3V1.6A1.6 1.6 0 0 1 1.8 0z" fill="#dea6f6"/><rect x="3.6" y="5" width="1.6" height="1.6" fill="#232b33"/><rect x="6.2" y="5" width="1.6" height="1.6" fill="#232b33"/><rect x="8.8" y="5" width="1.6" height="1.6" fill="#232b33"/></svg>
<div style="position:absolute;left:1616.30px;top:704.23px;font:700 16.5px/1 'Liberation Sans', sans-serif;color:#dea6f6;white-space:nowrap;transform:scaleX(0.8444);transform-origin:0 0;">SMS</div>
<div style="position:absolute;left:1667px;top:695px;width:42px;height:38px;background:#232b33;border-radius:7px;"></div>
<svg style="position:absolute;left:1679px;top:705px;overflow:visible;" width="18" height="18" viewBox="0 0 18 18"><rect x="0" y="0" width="18" height="18" rx="2.2" fill="#66d43c"/><path d="M2.5 9.2l3.6 3.6L14.8 4" fill="none" stroke="#232b33" stroke-width="2.2"/></svg>
<div style="position:absolute;left:1714px;top:695px;width:181.5999999999999px;height:38px;background:#232b33;border-radius:7px;"></div>
<svg style="position:absolute;left:1724px;top:705px;overflow:visible;" width="18" height="18" viewBox="0 0 18 18"><circle cx="9" cy="9" r="8" fill="none" stroke="#f0dc78" stroke-width="1.8"/><path d="M9.3 3.8v5.6L5.5 11.8" fill="none" stroke="#f0dc78" stroke-width="1.7"/></svg>
<div style="position:absolute;left:1750.50px;top:704.33px;font:400 16.5px/1 'Liberation Sans', sans-serif;color:#f0dc78;white-space:nowrap;transform:scaleX(0.8980);transform-origin:0 0;">12:30 PM - 2:00 PM</div>
<div style="position:absolute;left:1900.6px;top:695px;width:41.5px;height:38px;background:#232b33;border-radius:7px;"></div>
<svg style="position:absolute;left:1912.8px;top:706.5px;overflow:visible;" width="17" height="17" viewBox="0 0 17 17"><circle cx="8.5" cy="4.2" r="4.1" fill="#eca83a"/><path d="M0.3 16.8q0-6.2 8.2-6.2t8.2 6.2z" fill="#eca83a"/></svg>
<div style="position:absolute;left:1955.00px;top:703.81px;font:400 17px/1 'Liberation Sans', sans-serif;color:#ececec;white-space:nowrap;transform:scaleX(0.9462);transform-origin:0 0;text-shadow:0 1px 1px rgba(0,0,0,.35);">Lewis Santino</div>
<div style="position:absolute;left:2075.8px;top:700px;width:34.19999999999982px;height:28px;background:#14171a;border-radius:9px;box-shadow:0 1px 3px rgba(0,0,0,.45);"></div>
<div style="position:absolute;left:2083.60px;top:702.98px;font:700 17.5px/1 'Liberation Sans', sans-serif;color:#eca83a;white-space:nowrap;transform:scaleX(0.8455);transform-origin:0 0;">(2)</div>
<div style="position:absolute;left:2066px;top:743px;width:42px;height:37px;background:#232b33;border-radius:7px;"></div>
<div style="position:absolute;left:2113px;top:743px;width:40.5px;height:37px;background:#232b33;border-radius:7px;"></div>
<div style="position:absolute;left:2159px;top:743px;width:50px;height:37px;background:#232b33;border-radius:7px;"></div>
<div style="position:absolute;left:2214px;top:743px;width:46.59999999999991px;height:37px;background:#232b33;border-radius:7px;"></div>
<div style="position:absolute;left:2266px;top:743px;width:42px;height:37px;background:#232b33;border-radius:7px;"></div>
<svg style="position:absolute;left:2081.25px;top:750.8px;overflow:visible;" width="12" height="20" viewBox="0 0 12 20"><path d="M0 0h11.5L9 4.5h-6.5z" fill="#b5bccb"/><path d="M3 5.5h5.5L11 15.5 5.75 20.2 0.5 15.5z" fill="#b5bccb"/></svg>
<svg style="position:absolute;left:2124.25px;top:750.5px;overflow:visible;" width="18" height="20" viewBox="0 0 18 20"><circle cx="9" cy="10" r="4.3" fill="none" stroke="#6cd876" stroke-width="2.4"/><path d="M9.00 -0.30L11.50 2.90L6.50 2.90z" fill="#6cd876"/><path d="M17.92 4.85L16.40 8.62L13.90 4.28z" fill="#6cd876"/><path d="M17.92 15.15L13.90 15.72L16.40 11.38z" fill="#6cd876"/><path d="M9.00 20.30L6.50 17.10L11.50 17.10z" fill="#6cd876"/><path d="M0.08 15.15L1.60 11.38L4.10 15.72z" fill="#6cd876"/><path d="M0.08 4.85L4.10 4.28L1.60 8.62z" fill="#6cd876"/></svg>
<div style="position:absolute;left:1584.0px;width:1200px;text-align:center;top:751.65px;font:400 16px/1 'Liberation Sans', sans-serif;color:#4fb0f0;white-space:nowrap;">23</div>
<div style="position:absolute;left:1637.3000000000002px;width:1200px;text-align:center;top:751.65px;font:700 16px/1 'Liberation Sans', sans-serif;color:#8c959e;white-space:nowrap;">90&#8217;</div>
<svg style="position:absolute;left:2276.0px;top:751px;overflow:visible;" width="22" height="20" viewBox="0 0 22 20"><rect x="1" y="1" width="20" height="13.5" rx="1" fill="none" stroke="#7f8890" stroke-width="2"/><rect x="10" y="15" width="2" height="3" fill="#7f8890"/><rect x="6.5" y="17.5" width="9" height="2.5" fill="#7f8890"/></svg>
<div style="position:absolute;left:1571px;top:796px;width:740px;height:97px;background:#3a4650;border-radius:7px;box-shadow:inset 0 -1px 0 #474b5a;"></div>
<div style="position:absolute;left:1575px;top:802px;width:87px;height:38px;background:#232b33;border-radius:7px;"></div>
<svg style="position:absolute;left:1591px;top:814px;overflow:visible;" width="14" height="13.5" viewBox="0 0 14 13.5"><path d="M1.8 0h10.6A1.6 1.6 0 0 1 14 1.6v8.2a1.6 1.6 0 0 1-1.6 1.6H4.2L0.4 13.3V1.6A1.6 1.6 0 0 1 1.8 0z" fill="#dea6f6"/><rect x="3.6" y="5" width="1.6" height="1.6" fill="#232b33"/><rect x="6.2" y="5" width="1.6" height="1.6" fill="#232b33"/><rect x="8.8" y="5" width="1.6" height="1.6" fill="#232b33"/></svg>
<div style="position:absolute;left:1616.30px;top:811.23px;font:700 16.5px/1 'Liberation Sans', sans-serif;color:#dea6f6;white-space:nowrap;transform:scaleX(0.8444);transform-origin:0 0;">SMS</div>
<div style="position:absolute;left:1667px;top:802px;width:42px;height:38px;background:#232b33;border-radius:7px;"></div>
<svg style="position:absolute;left:1679.5px;top:812px;overflow:visible;" width="17" height="18" viewBox="6.8 6.2 16.5 17.6"><path d="M7.3 6.6H8.9V12.2H10.8V6.6H12.3V12.2H14.2V6.6H15.8V12.6Q15.8 15.4 13 15.4V23Q13 23.4 12.6 23.4H11.2Q10.8 23.4 10.8 23V15.4Q7.3 15.4 7.3 12.6Z" fill="#5ab6f0"/><path d="M22.9 6.6V23Q22.9 23.4 22.5 23.4H20.6Q20.2 23.4 20.2 23V16.6H18.2V11Q18.2 7.4 22.9 6.6Z" fill="#5ab6f0"/></svg>
<div style="position:absolute;left:1714px;top:802px;width:176.70000000000005px;height:38px;background:#232b33;border-radius:7px;"></div>
<svg style="position:absolute;left:1724px;top:812px;overflow:visible;" width="18" height="18" viewBox="0 0 18 18"><circle cx="9" cy="9" r="8" fill="none" stroke="#f0dc78" stroke-width="1.8"/><path d="M9.3 3.8v5.6L5.5 11.8" fill="none" stroke="#f0dc78" stroke-width="1.7"/></svg>
<div style="position:absolute;left:1750.50px;top:811.33px;font:400 16.5px/1 'Liberation Sans', sans-serif;color:#f0dc78;white-space:nowrap;transform:scaleX(0.8819);transform-origin:0 0;">9:45 AM - 11:15 AM</div>
<div style="position:absolute;left:1895.7px;top:802px;width:41.5px;height:38px;background:#232b33;border-radius:7px;"></div>
<svg style="position:absolute;left:1907.9px;top:813.5px;overflow:visible;" width="17" height="17" viewBox="0 0 17 17"><circle cx="8.5" cy="4.2" r="4.1" fill="#eca83a"/><path d="M0.3 16.8q0-6.2 8.2-6.2t8.2 6.2z" fill="#eca83a"/></svg>
<div style="position:absolute;left:1950.80px;top:810.81px;font:400 17px/1 'Liberation Sans', sans-serif;color:#ececec;white-space:nowrap;transform:scaleX(0.9451);transform-origin:0 0;text-shadow:0 1px 1px rgba(0,0,0,.35);">Bender Emily</div>
<div style="position:absolute;left:2067px;top:807px;width:34px;height:28px;background:#14171a;border-radius:9px;box-shadow:0 1px 3px rgba(0,0,0,.45);"></div>
<div style="position:absolute;left:2074.70px;top:809.98px;font:700 17.5px/1 'Liberation Sans', sans-serif;color:#eca83a;white-space:nowrap;transform:scaleX(0.8455);transform-origin:0 0;">(2)</div>
<div style="position:absolute;left:2066px;top:850px;width:42px;height:37px;background:#232b33;border-radius:7px;"></div>
<div style="position:absolute;left:2113px;top:850px;width:40.5px;height:37px;background:#232b33;border-radius:7px;"></div>
<div style="position:absolute;left:2159px;top:850px;width:50px;height:37px;background:#232b33;border-radius:7px;"></div>
<div style="position:absolute;left:2214px;top:850px;width:46.59999999999991px;height:37px;background:#232b33;border-radius:7px;"></div>
<div style="position:absolute;left:2266px;top:850px;width:42px;height:37px;background:#232b33;border-radius:7px;"></div>
<svg style="position:absolute;left:2081.25px;top:857.8px;overflow:visible;" width="12" height="20" viewBox="0 0 12 20"><path d="M0 0h11.5L9 4.5h-6.5z" fill="#b5bccb"/><path d="M3 5.5h5.5L11 15.5 5.75 20.2 0.5 15.5z" fill="#b5bccb"/></svg>
<svg style="position:absolute;left:2123.25px;top:856.0px;overflow:visible;" width="20" height="17" viewBox="0 0 20 17"><path d="M10 0L19.6 9.3h-2.8V17h-4.3v-5.5h-5V17H3.2V9.3H0.4z" fill="#6cd888"/></svg>
<div style="position:absolute;left:1584.0px;width:1200px;text-align:center;top:858.65px;font:400 16px/1 'Liberation Sans', sans-serif;color:#4fb0f0;white-space:nowrap;">8</div>
<div style="position:absolute;left:1637.3000000000002px;width:1200px;text-align:center;top:858.65px;font:700 16px/1 'Liberation Sans', sans-serif;color:#8c959e;white-space:nowrap;">90&#8217;</div>
<svg style="position:absolute;left:2276.0px;top:858px;overflow:visible;" width="22" height="20" viewBox="0 0 22 20"><rect x="1" y="1" width="20" height="13.5" rx="1" fill="none" stroke="#7f8890" stroke-width="2"/><rect x="10" y="15" width="2" height="3" fill="#7f8890"/><rect x="6.5" y="17.5" width="9" height="2.5" fill="#7f8890"/></svg>
<div style="position:absolute;left:1571px;top:903px;width:740px;height:97px;background:#3a4650;border-radius:7px;box-shadow:inset 0 -1px 0 #474b5a;"></div>
<div style="position:absolute;left:1575px;top:909px;width:87px;height:38px;background:#232b33;border-radius:7px;"></div>
<svg style="position:absolute;left:1591px;top:921px;overflow:visible;" width="14" height="13.5" viewBox="0 0 14 13.5"><path d="M1.8 0h10.6A1.6 1.6 0 0 1 14 1.6v8.2a1.6 1.6 0 0 1-1.6 1.6H4.2L0.4 13.3V1.6A1.6 1.6 0 0 1 1.8 0z" fill="#dea6f6"/><rect x="3.6" y="5" width="1.6" height="1.6" fill="#232b33"/><rect x="6.2" y="5" width="1.6" height="1.6" fill="#232b33"/><rect x="8.8" y="5" width="1.6" height="1.6" fill="#232b33"/></svg>
<div style="position:absolute;left:1616.30px;top:918.23px;font:700 16.5px/1 'Liberation Sans', sans-serif;color:#dea6f6;white-space:nowrap;transform:scaleX(0.8444);transform-origin:0 0;">SMS</div>
<div style="position:absolute;left:1667px;top:909px;width:42px;height:38px;background:#232b33;border-radius:7px;"></div>
<svg style="position:absolute;left:1679.5px;top:919px;overflow:visible;" width="17" height="18" viewBox="6.8 6.2 16.5 17.6"><path d="M7.3 6.6H8.9V12.2H10.8V6.6H12.3V12.2H14.2V6.6H15.8V12.6Q15.8 15.4 13 15.4V23Q13 23.4 12.6 23.4H11.2Q10.8 23.4 10.8 23V15.4Q7.3 15.4 7.3 12.6Z" fill="#5ab6f0"/><path d="M22.9 6.6V23Q22.9 23.4 22.5 23.4H20.6Q20.2 23.4 20.2 23V16.6H18.2V11Q18.2 7.4 22.9 6.6Z" fill="#5ab6f0"/></svg>
<div style="position:absolute;left:1714px;top:909px;width:188.79999999999995px;height:38px;background:#232b33;border-radius:7px;"></div>
<svg style="position:absolute;left:1724px;top:919px;overflow:visible;" width="18" height="18" viewBox="0 0 18 18"><circle cx="9" cy="9" r="8" fill="none" stroke="#f0dc78" stroke-width="1.8"/><path d="M9.3 3.8v5.6L5.5 11.8" fill="none" stroke="#f0dc78" stroke-width="1.7"/></svg>
<div style="position:absolute;left:1750.50px;top:918.33px;font:400 16.5px/1 'Liberation Sans', sans-serif;color:#f0dc78;white-space:nowrap;transform:scaleX(0.9105);transform-origin:0 0;">10:00 AM - 11:30 AM</div>
<div style="position:absolute;left:1907.8px;top:909px;width:41.5px;height:38px;background:#232b33;border-radius:7px;"></div>
<svg style="position:absolute;left:1920.0px;top:920.5px;overflow:visible;" width="17" height="17" viewBox="0 0 17 17"><circle cx="8.5" cy="4.2" r="4.1" fill="#eca83a"/><path d="M0.3 16.8q0-6.2 8.2-6.2t8.2 6.2z" fill="#eca83a"/></svg>
<div style="position:absolute;left:1962.50px;top:917.81px;font:400 17px/1 'Liberation Sans', sans-serif;color:#ececec;white-space:nowrap;transform:scaleX(0.9872);transform-origin:0 0;text-shadow:0 1px 1px rgba(0,0,0,.35);">Moulton Phil</div>
<div style="position:absolute;left:2075.2px;top:914px;width:33.30000000000018px;height:28px;background:#14171a;border-radius:9px;box-shadow:0 1px 3px rgba(0,0,0,.45);"></div>
<div style="position:absolute;left:2082.55px;top:916.98px;font:700 17.5px/1 'Liberation Sans', sans-serif;color:#eca83a;white-space:nowrap;transform:scaleX(0.8455);transform-origin:0 0;">(2)</div>
<div style="position:absolute;left:2066px;top:957px;width:42px;height:37px;background:#232b33;border-radius:7px;"></div>
<div style="position:absolute;left:2113px;top:957px;width:40.5px;height:37px;background:#232b33;border-radius:7px;"></div>
<div style="position:absolute;left:2159px;top:957px;width:50px;height:37px;background:#232b33;border-radius:7px;"></div>
<div style="position:absolute;left:2214px;top:957px;width:46.59999999999991px;height:37px;background:#232b33;border-radius:7px;"></div>
<div style="position:absolute;left:2266px;top:957px;width:42px;height:37px;background:#232b33;border-radius:7px;"></div>
<svg style="position:absolute;left:2081.25px;top:964.8px;overflow:visible;" width="12" height="20" viewBox="0 0 12 20"><path d="M0 0h11.5L9 4.5h-6.5z" fill="#b5bccb"/><path d="M3 5.5h5.5L11 15.5 5.75 20.2 0.5 15.5z" fill="#b5bccb"/></svg>
<svg style="position:absolute;left:2123.25px;top:963.0px;overflow:visible;" width="20" height="17" viewBox="0 0 20 17"><path d="M10 0L19.6 9.3h-2.8V17h-4.3v-5.5h-5V17H3.2V9.3H0.4z" fill="#6cd888"/></svg>
<div style="position:absolute;left:1584.0px;width:1200px;text-align:center;top:965.65px;font:400 16px/1 'Liberation Sans', sans-serif;color:#4fb0f0;white-space:nowrap;">21</div>
<div style="position:absolute;left:1637.3000000000002px;width:1200px;text-align:center;top:965.65px;font:700 16px/1 'Liberation Sans', sans-serif;color:#8c959e;white-space:nowrap;">90&#8217;</div>
<svg style="position:absolute;left:2276.0px;top:965px;overflow:visible;" width="22" height="20" viewBox="0 0 22 20"><rect x="1" y="1" width="20" height="13.5" rx="1" fill="none" stroke="#7f8890" stroke-width="2"/><rect x="10" y="15" width="2" height="3" fill="#7f8890"/><rect x="6.5" y="17.5" width="9" height="2.5" fill="#7f8890"/></svg>
<div style="position:absolute;left:1571px;top:1010px;width:740px;height:97px;background:#3a4650;border-radius:7px;box-shadow:inset 0 -1px 0 #474b5a;"></div>
<div style="position:absolute;left:1575px;top:1016px;width:87px;height:38px;background:#232b33;border-radius:7px;"></div>
<svg style="position:absolute;left:1591px;top:1028px;overflow:visible;" width="14" height="13.5" viewBox="0 0 14 13.5"><path d="M1.8 0h10.6A1.6 1.6 0 0 1 14 1.6v8.2a1.6 1.6 0 0 1-1.6 1.6H4.2L0.4 13.3V1.6A1.6 1.6 0 0 1 1.8 0z" fill="#dea6f6"/><rect x="3.6" y="5" width="1.6" height="1.6" fill="#232b33"/><rect x="6.2" y="5" width="1.6" height="1.6" fill="#232b33"/><rect x="8.8" y="5" width="1.6" height="1.6" fill="#232b33"/></svg>
<div style="position:absolute;left:1616.30px;top:1025.23px;font:700 16.5px/1 'Liberation Sans', sans-serif;color:#dea6f6;white-space:nowrap;transform:scaleX(0.8444);transform-origin:0 0;">SMS</div>
<div style="position:absolute;left:1667px;top:1016px;width:42px;height:38px;background:#232b33;border-radius:7px;"></div>
<svg style="position:absolute;left:1679.5px;top:1026px;overflow:visible;" width="17" height="18" viewBox="6.8 6.2 16.5 17.6"><path d="M7.3 6.6H8.9V12.2H10.8V6.6H12.3V12.2H14.2V6.6H15.8V12.6Q15.8 15.4 13 15.4V23Q13 23.4 12.6 23.4H11.2Q10.8 23.4 10.8 23V15.4Q7.3 15.4 7.3 12.6Z" fill="#5ab6f0"/><path d="M22.9 6.6V23Q22.9 23.4 22.5 23.4H20.6Q20.2 23.4 20.2 23V16.6H18.2V11Q18.2 7.4 22.9 6.6Z" fill="#5ab6f0"/></svg>
<div style="position:absolute;left:1714px;top:1016px;width:186.5px;height:38px;background:#232b33;border-radius:7px;"></div>
<svg style="position:absolute;left:1724px;top:1026px;overflow:visible;" width="18" height="18" viewBox="0 0 18 18"><circle cx="9" cy="9" r="8" fill="none" stroke="#f0dc78" stroke-width="1.8"/><path d="M9.3 3.8v5.6L5.5 11.8" fill="none" stroke="#f0dc78" stroke-width="1.7"/></svg>
<div style="position:absolute;left:1750.50px;top:1025.33px;font:400 16.5px/1 'Liberation Sans', sans-serif;color:#f0dc78;white-space:nowrap;transform:scaleX(0.8954);transform-origin:0 0;">10:26 AM - 11:56 AM</div>
<div style="position:absolute;left:1905.5px;top:1016px;width:41.5px;height:38px;background:#232b33;border-radius:7px;"></div>
<svg style="position:absolute;left:1917.7px;top:1027.5px;overflow:visible;" width="17" height="17" viewBox="0 0 17 17"><circle cx="8.5" cy="4.2" r="4.1" fill="#b5bccb"/><path d="M0.3 16.8q0-6.2 8.2-6.2t8.2 6.2z" fill="#b5bccb"/></svg>
<div style="position:absolute;left:1960.60px;top:1024.81px;font:400 17px/1 'Liberation Sans', sans-serif;color:#ececec;white-space:nowrap;transform:scaleX(0.9383);transform-origin:0 0;text-shadow:0 1px 1px rgba(0,0,0,.35);">Walk-In Guest</div>
<div style="position:absolute;left:2081.4px;top:1021px;width:32.59999999999991px;height:28px;background:#14171a;border-radius:9px;box-shadow:0 1px 3px rgba(0,0,0,.45);"></div>
<div style="position:absolute;left:2088.40px;top:1023.98px;font:700 17.5px/1 'Liberation Sans', sans-serif;color:#eca83a;white-space:nowrap;transform:scaleX(0.8455);transform-origin:0 0;">(1)</div>
<div style="position:absolute;left:2066px;top:1064px;width:42px;height:37px;background:#232b33;border-radius:7px;"></div>
<div style="position:absolute;left:2113px;top:1064px;width:40.5px;height:37px;background:#232b33;border-radius:7px;"></div>
<div style="position:absolute;left:2159px;top:1064px;width:50px;height:37px;background:#232b33;border-radius:7px;"></div>
<div style="position:absolute;left:2214px;top:1064px;width:46.59999999999991px;height:37px;background:#232b33;border-radius:7px;"></div>
<div style="position:absolute;left:2266px;top:1064px;width:42px;height:37px;background:#232b33;border-radius:7px;"></div>
<svg style="position:absolute;left:2081.25px;top:1071.8px;overflow:visible;" width="12" height="20" viewBox="0 0 12 20"><path d="M0 0h11.5L9 4.5h-6.5z" fill="#b5bccb"/><path d="M3 5.5h5.5L11 15.5 5.75 20.2 0.5 15.5z" fill="#b5bccb"/></svg>
<svg style="position:absolute;left:2124.25px;top:1071.5px;overflow:visible;" width="18" height="20" viewBox="0 0 18 20"><circle cx="9" cy="10" r="4.3" fill="none" stroke="#6cd876" stroke-width="2.4"/><path d="M9.00 -0.30L11.50 2.90L6.50 2.90z" fill="#6cd876"/><path d="M17.92 4.85L16.40 8.62L13.90 4.28z" fill="#6cd876"/><path d="M17.92 15.15L13.90 15.72L16.40 11.38z" fill="#6cd876"/><path d="M9.00 20.30L6.50 17.10L11.50 17.10z" fill="#6cd876"/><path d="M0.08 15.15L1.60 11.38L4.10 15.72z" fill="#6cd876"/><path d="M0.08 4.85L4.10 4.28L1.60 8.62z" fill="#6cd876"/></svg>
<div style="position:absolute;left:1584.0px;width:1200px;text-align:center;top:1072.65px;font:400 16px/1 'Liberation Sans', sans-serif;color:#4fb0f0;white-space:nowrap;">19</div>
<div style="position:absolute;left:1637.3000000000002px;width:1200px;text-align:center;top:1072.65px;font:700 16px/1 'Liberation Sans', sans-serif;color:#8c959e;white-space:nowrap;">90&#8217;</div>
<svg style="position:absolute;left:2276.0px;top:1072px;overflow:visible;" width="22" height="20" viewBox="0 0 22 20"><path d="M5.5 0.5l2.5 1h6l2.5-1 2 7.5h-15z" fill="#7f8890"/><rect x="0" y="9" width="22" height="1.8" fill="#7f8890"/><circle cx="5.5" cy="16" r="3.3" fill="none" stroke="#7f8890" stroke-width="1.6"/><circle cx="16.5" cy="16" r="3.3" fill="none" stroke="#7f8890" stroke-width="1.6"/><path d="M8.8 15.8q2.2-1.3 4.4 0" fill="none" stroke="#7f8890" stroke-width="1.4"/></svg>
<div style="position:absolute;left:1571px;top:1117px;width:740px;height:97px;background:#3a4650;border-radius:7px;box-shadow:inset 0 -1px 0 #474b5a;"></div>
<div style="position:absolute;left:1575px;top:1123px;width:87px;height:38px;background:#232b33;border-radius:7px;"></div>
<svg style="position:absolute;left:1591px;top:1135px;overflow:visible;" width="14" height="13.5" viewBox="0 0 14 13.5"><path d="M1.8 0h10.6A1.6 1.6 0 0 1 14 1.6v8.2a1.6 1.6 0 0 1-1.6 1.6H4.2L0.4 13.3V1.6A1.6 1.6 0 0 1 1.8 0z" fill="#dea6f6"/><rect x="3.6" y="5" width="1.6" height="1.6" fill="#232b33"/><rect x="6.2" y="5" width="1.6" height="1.6" fill="#232b33"/><rect x="8.8" y="5" width="1.6" height="1.6" fill="#232b33"/></svg>
<div style="position:absolute;left:1616.30px;top:1132.23px;font:700 16.5px/1 'Liberation Sans', sans-serif;color:#dea6f6;white-space:nowrap;transform:scaleX(0.8444);transform-origin:0 0;">SMS</div>
<div style="position:absolute;left:1667px;top:1123px;width:42px;height:38px;background:#232b33;border-radius:7px;"></div>
<svg style="position:absolute;left:1679.5px;top:1133px;overflow:visible;" width="17" height="18" viewBox="6.8 6.2 16.5 17.6"><path d="M7.3 6.6H8.9V12.2H10.8V6.6H12.3V12.2H14.2V6.6H15.8V12.6Q15.8 15.4 13 15.4V23Q13 23.4 12.6 23.4H11.2Q10.8 23.4 10.8 23V15.4Q7.3 15.4 7.3 12.6Z" fill="#5ab6f0"/><path d="M22.9 6.6V23Q22.9 23.4 22.5 23.4H20.6Q20.2 23.4 20.2 23V16.6H18.2V11Q18.2 7.4 22.9 6.6Z" fill="#5ab6f0"/></svg>
<div style="position:absolute;left:1714px;top:1123px;width:189.4000000000001px;height:38px;background:#232b33;border-radius:7px;"></div>
<svg style="position:absolute;left:1724px;top:1133px;overflow:visible;" width="18" height="18" viewBox="0 0 18 18"><circle cx="9" cy="9" r="8" fill="none" stroke="#f0dc78" stroke-width="1.8"/><path d="M9.3 3.8v5.6L5.5 11.8" fill="none" stroke="#f0dc78" stroke-width="1.7"/></svg>
<div style="position:absolute;left:1750.50px;top:1132.33px;font:400 16.5px/1 'Liberation Sans', sans-serif;color:#f0dc78;white-space:nowrap;transform:scaleX(0.9032);transform-origin:0 0;">10:30 AM - 12:00 PM</div>
<div style="position:absolute;left:1908.4px;top:1123px;width:41.5px;height:38px;background:#232b33;border-radius:7px;"></div>
<svg style="position:absolute;left:1920.6000000000001px;top:1134.5px;overflow:visible;" width="17" height="17" viewBox="0 0 17 17"><circle cx="8.5" cy="4.2" r="4.1" fill="#eca83a"/><path d="M0.3 16.8q0-6.2 8.2-6.2t8.2 6.2z" fill="#eca83a"/></svg>
<div style="position:absolute;left:1963.20px;top:1131.81px;font:400 17px/1 'Liberation Sans', sans-serif;color:#ececec;white-space:nowrap;transform:scaleX(0.9425);transform-origin:0 0;text-shadow:0 1px 1px rgba(0,0,0,.35);">Stowers Shannon</div>
<div style="position:absolute;left:2111px;top:1128px;width:32.69999999999982px;height:28px;background:#14171a;border-radius:9px;box-shadow:0 1px 3px rgba(0,0,0,.45);"></div>
<div style="position:absolute;left:2118.05px;top:1130.98px;font:700 17.5px/1 'Liberation Sans', sans-serif;color:#eca83a;white-space:nowrap;transform:scaleX(0.8455);transform-origin:0 0;">(2)</div>
<div style="position:absolute;left:2066px;top:1171px;width:42px;height:37px;background:#232b33;border-radius:7px;"></div>
<div style="position:absolute;left:2113px;top:1171px;width:40.5px;height:37px;background:#232b33;border-radius:7px;"></div>
<div style="position:absolute;left:2159px;top:1171px;width:50px;height:37px;background:#232b33;border-radius:7px;"></div>
<div style="position:absolute;left:2214px;top:1171px;width:46.59999999999991px;height:37px;background:#232b33;border-radius:7px;"></div>
<div style="position:absolute;left:2266px;top:1171px;width:42px;height:37px;background:#232b33;border-radius:7px;"></div>
<svg style="position:absolute;left:2081.25px;top:1178.8px;overflow:visible;" width="12" height="20" viewBox="0 0 12 20"><path d="M0 0h11.5L9 4.5h-6.5z" fill="#b5bccb"/><path d="M3 5.5h5.5L11 15.5 5.75 20.2 0.5 15.5z" fill="#b5bccb"/></svg>
<svg style="position:absolute;left:2123.25px;top:1177.0px;overflow:visible;" width="20" height="17" viewBox="0 0 20 17"><path d="M10 0L19.6 9.3h-2.8V17h-4.3v-5.5h-5V17H3.2V9.3H0.4z" fill="#6cd888"/></svg>
<div style="position:absolute;left:1584.0px;width:1200px;text-align:center;top:1179.65px;font:400 16px/1 'Liberation Sans', sans-serif;color:#4fb0f0;white-space:nowrap;">8B</div>
<div style="position:absolute;left:1637.3000000000002px;width:1200px;text-align:center;top:1179.65px;font:700 16px/1 'Liberation Sans', sans-serif;color:#8c959e;white-space:nowrap;">90&#8217;</div>
<svg style="position:absolute;left:2276.0px;top:1179px;overflow:visible;" width="22" height="20" viewBox="0 0 22 20"><rect x="1" y="1" width="20" height="13.5" rx="1" fill="none" stroke="#7f8890" stroke-width="2"/><rect x="10" y="15" width="2" height="3" fill="#7f8890"/><rect x="6.5" y="17.5" width="9" height="2.5" fill="#7f8890"/></svg>
<div style="position:absolute;left:1571px;top:1224px;width:740px;height:97px;background:#3a4650;border-radius:7px;box-shadow:inset 0 -1px 0 #474b5a;"></div>
<div style="position:absolute;left:1575px;top:1230px;width:87px;height:38px;background:#232b33;border-radius:7px;"></div>
<svg style="position:absolute;left:1591px;top:1242px;overflow:visible;" width="14" height="13.5" viewBox="0 0 14 13.5"><path d="M1.8 0h10.6A1.6 1.6 0 0 1 14 1.6v8.2a1.6 1.6 0 0 1-1.6 1.6H4.2L0.4 13.3V1.6A1.6 1.6 0 0 1 1.8 0z" fill="#dea6f6"/><rect x="3.6" y="5" width="1.6" height="1.6" fill="#232b33"/><rect x="6.2" y="5" width="1.6" height="1.6" fill="#232b33"/><rect x="8.8" y="5" width="1.6" height="1.6" fill="#232b33"/></svg>
<div style="position:absolute;left:1616.30px;top:1239.23px;font:700 16.5px/1 'Liberation Sans', sans-serif;color:#dea6f6;white-space:nowrap;transform:scaleX(0.8444);transform-origin:0 0;">SMS</div>
<div style="position:absolute;left:1667px;top:1230px;width:42px;height:38px;background:#232b33;border-radius:7px;"></div>
<svg style="position:absolute;left:1679.5px;top:1240px;overflow:visible;" width="17" height="18" viewBox="6.8 6.2 16.5 17.6"><path d="M7.3 6.6H8.9V12.2H10.8V6.6H12.3V12.2H14.2V6.6H15.8V12.6Q15.8 15.4 13 15.4V23Q13 23.4 12.6 23.4H11.2Q10.8 23.4 10.8 23V15.4Q7.3 15.4 7.3 12.6Z" fill="#5ab6f0"/><path d="M22.9 6.6V23Q22.9 23.4 22.5 23.4H20.6Q20.2 23.4 20.2 23V16.6H18.2V11Q18.2 7.4 22.9 6.6Z" fill="#5ab6f0"/></svg>
<div style="position:absolute;left:1714px;top:1230px;width:185.5px;height:38px;background:#232b33;border-radius:7px;"></div>
<svg style="position:absolute;left:1724px;top:1240px;overflow:visible;" width="18" height="18" viewBox="0 0 18 18"><circle cx="9" cy="9" r="8" fill="none" stroke="#f0dc78" stroke-width="1.8"/><path d="M9.3 3.8v5.6L5.5 11.8" fill="none" stroke="#f0dc78" stroke-width="1.7"/></svg>
<div style="position:absolute;left:1750.50px;top:1239.33px;font:400 16.5px/1 'Liberation Sans', sans-serif;color:#f0dc78;white-space:nowrap;transform:scaleX(0.8774);transform-origin:0 0;">10:45 AM - 12:15 PM</div>
<div style="position:absolute;left:1904.5px;top:1230px;width:41.5px;height:38px;background:#232b33;border-radius:7px;"></div>
<svg style="position:absolute;left:1916.7px;top:1241.5px;overflow:visible;" width="17" height="17" viewBox="0 0 17 17"><circle cx="8.5" cy="4.2" r="4.1" fill="#eca83a"/><path d="M0.3 16.8q0-6.2 8.2-6.2t8.2 6.2z" fill="#eca83a"/></svg>
<div style="position:absolute;left:1959.00px;top:1238.81px;font:400 17px/1 'Liberation Sans', sans-serif;color:#ececec;white-space:nowrap;transform:scaleX(0.9135);transform-origin:0 0;text-shadow:0 1px 1px rgba(0,0,0,.35);">Hughes Clara</div>
<div style="position:absolute;left:2082px;top:1235px;width:30px;height:28px;background:#14171a;border-radius:9px;box-shadow:0 1px 3px rgba(0,0,0,.45);"></div>
<div style="position:absolute;left:2087.70px;top:1237.98px;font:700 17.5px/1 'Liberation Sans', sans-serif;color:#eca83a;white-space:nowrap;transform:scaleX(0.8455);transform-origin:0 0;">(2)</div>
<div style="position:absolute;left:2066px;top:1278px;width:42px;height:37px;background:#232b33;border-radius:7px;"></div>
<div style="position:absolute;left:2113px;top:1278px;width:40.5px;height:37px;background:#232b33;border-radius:7px;"></div>
<div style="position:absolute;left:2159px;top:1278px;width:50px;height:37px;background:#232b33;border-radius:7px;"></div>
<div style="position:absolute;left:2214px;top:1278px;width:46.59999999999991px;height:37px;background:#232b33;border-radius:7px;"></div>
<div style="position:absolute;left:2266px;top:1278px;width:42px;height:37px;background:#232b33;border-radius:7px;"></div>
<svg style="position:absolute;left:2081.25px;top:1285.8px;overflow:visible;" width="12" height="20" viewBox="0 0 12 20"><path d="M0 0h11.5L9 4.5h-6.5z" fill="#b5bccb"/><path d="M3 5.5h5.5L11 15.5 5.75 20.2 0.5 15.5z" fill="#b5bccb"/></svg>
<svg style="position:absolute;left:2123.25px;top:1284.0px;overflow:visible;" width="20" height="17" viewBox="0 0 20 17"><path d="M10 0L19.6 9.3h-2.8V17h-4.3v-5.5h-5V17H3.2V9.3H0.4z" fill="#6cd888"/></svg>
<div style="position:absolute;left:1584.0px;width:1200px;text-align:center;top:1286.65px;font:400 16px/1 'Liberation Sans', sans-serif;color:#4fb0f0;white-space:nowrap;">9</div>
<div style="position:absolute;left:1637.3000000000002px;width:1200px;text-align:center;top:1286.65px;font:700 16px/1 'Liberation Sans', sans-serif;color:#8c959e;white-space:nowrap;">90&#8217;</div>
<svg style="position:absolute;left:2276.0px;top:1286px;overflow:visible;" width="22" height="20" viewBox="0 0 22 20"><rect x="1" y="1" width="20" height="13.5" rx="1" fill="none" stroke="#7f8890" stroke-width="2"/><rect x="10" y="15" width="2" height="3" fill="#7f8890"/><rect x="6.5" y="17.5" width="9" height="2.5" fill="#7f8890"/></svg>
</body></html>
